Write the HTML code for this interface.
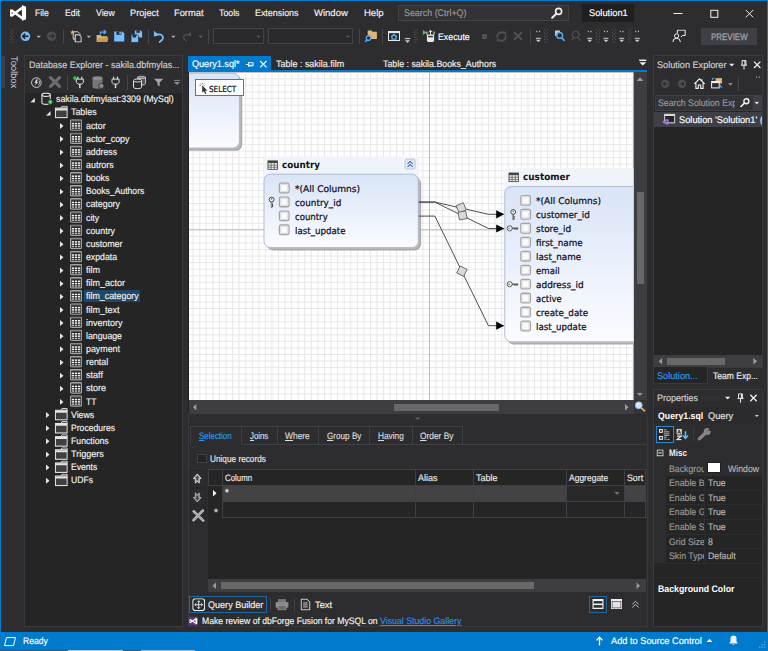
<!DOCTYPE html>
<html lang="en"><head><meta charset="utf-8"><title>Query1.sql - dbForge Fusion</title>
<style>
html,body{margin:0;padding:0;}
body{width:768px;height:651px;overflow:hidden;background:#2d2d30;position:relative;font-family:"Liberation Sans",sans-serif;}
#w{position:absolute;left:0;top:0;width:768px;height:651px;overflow:hidden;background:#2d2d30;}
#w div,#w svg{position:absolute;box-sizing:border-box;}
.t{position:absolute;white-space:nowrap;transform-origin:0 50%;display:block;}
.c{overflow:hidden;}
u{text-decoration:underline;}
</style></head><body><div id="w">
<div style="left:0.00px;top:0.00px;width:768.00px;height:1.00px;background:#007acc;"></div>
<div style="left:0.00px;top:0.00px;width:1.00px;height:651.00px;background:#007acc;"></div>
<div style="left:767.00px;top:0.00px;width:1.00px;height:651.00px;background:#007acc;"></div>
<svg style="left:9px;top:4px;transform:translate(0.60px,0.80px)" width="17" height="16.4" viewBox="0 0 17 16.4"><path d="M12.3 0.3 L16.5 2 V14.4 L12.3 16.1 Z" fill="#ffffff"/><path d="M1.6 5.3 L12.6 13.4 M1.6 11.1 L12.6 3" fill="none" stroke="#ffffff" stroke-width="2.5"/><path d="M1.3 4.6 V11.8" stroke="#ffffff" stroke-width="1.7"/></svg>
<span id="t1" class="t" style="left:35.00px;top:6.97px;height:12.35px;line-height:12.35px;font-size:9.5px;color:#f1f1f1;font-family:'Liberation Sans',sans-serif;transform:scaleX(0.8975) rotate(0.03deg);-webkit-text-stroke:0.16px #f1f1f1;">File</span>
<span id="t2" class="t" style="left:64.50px;top:6.97px;height:12.35px;line-height:12.35px;font-size:9.5px;color:#f1f1f1;font-family:'Liberation Sans',sans-serif;transform:scaleX(0.9157) rotate(0.03deg);-webkit-text-stroke:0.16px #f1f1f1;">Edit</span>
<span id="t3" class="t" style="left:95.75px;top:6.97px;height:12.35px;line-height:12.35px;font-size:9.5px;color:#f1f1f1;font-family:'Liberation Sans',sans-serif;transform:scaleX(0.9179) rotate(0.03deg);-webkit-text-stroke:0.16px #f1f1f1;">View</span>
<span id="t4" class="t" style="left:130.00px;top:6.97px;height:12.35px;line-height:12.35px;font-size:9.5px;color:#f1f1f1;font-family:'Liberation Sans',sans-serif;transform:scaleX(0.9718) rotate(0.03deg);-webkit-text-stroke:0.16px #f1f1f1;">Project</span>
<span id="t5" class="t" style="left:173.75px;top:6.97px;height:12.35px;line-height:12.35px;font-size:9.5px;color:#f1f1f1;font-family:'Liberation Sans',sans-serif;transform:scaleX(0.9800) rotate(0.03deg);-webkit-text-stroke:0.16px #f1f1f1;">Format</span>
<span id="t6" class="t" style="left:219.00px;top:6.97px;height:12.35px;line-height:12.35px;font-size:9.5px;color:#f1f1f1;font-family:'Liberation Sans',sans-serif;transform:scaleX(0.9237) rotate(0.03deg);-webkit-text-stroke:0.16px #f1f1f1;">Tools</span>
<span id="t7" class="t" style="left:255.25px;top:6.97px;height:12.35px;line-height:12.35px;font-size:9.5px;color:#f1f1f1;font-family:'Liberation Sans',sans-serif;transform:scaleX(0.9357) rotate(0.03deg);-webkit-text-stroke:0.16px #f1f1f1;">Extensions</span>
<span id="t8" class="t" style="left:314.00px;top:6.97px;height:12.35px;line-height:12.35px;font-size:9.5px;color:#f1f1f1;font-family:'Liberation Sans',sans-serif;transform:scaleX(1.0000) rotate(0.03deg);-webkit-text-stroke:0.16px #f1f1f1;">Window</span>
<span id="t9" class="t" style="left:363.75px;top:6.97px;height:12.35px;line-height:12.35px;font-size:9.5px;color:#f1f1f1;font-family:'Liberation Sans',sans-serif;transform:scaleX(1.0000) rotate(0.03deg);-webkit-text-stroke:0.16px #f1f1f1;">Help</span>
<div style="left:397.70px;top:4.50px;width:171.50px;height:16.80px;background:#333337;border:1px solid #434346;"></div>
<span id="t10" class="t" style="left:403.50px;top:7.07px;height:12.35px;line-height:12.35px;font-size:9.5px;color:#9a9a9a;font-family:'Liberation Sans',sans-serif;transform:scaleX(0.9358) rotate(0.03deg);-webkit-text-stroke:0.16px #9a9a9a;">Search (Ctrl+Q)</span>
<svg style="left:551px;top:7px" width="12" height="12" viewBox="0 0 12 12"><circle cx="7.6" cy="4.4" r="3" fill="none" stroke="#f1f1f1" stroke-width="1.6"/><path d="M5.4 6.6 L1.2 10.8" stroke="#f1f1f1" stroke-width="2" stroke-linecap="round"/></svg>
<div style="left:582.00px;top:4.00px;width:51.50px;height:18.00px;background:#1f1f20;"></div>
<span id="t11" class="t" style="left:588.50px;top:7.07px;height:12.35px;line-height:12.35px;font-size:9.5px;color:#ffffff;font-family:'Liberation Sans',sans-serif;transform:scaleX(0.9777) rotate(0.03deg);-webkit-text-stroke:0.16px #ffffff;">Solution1</span>
<svg style="left:672px;top:6px" width="90" height="16" viewBox="0 0 90 16"><path d="M1.5 7.5 H10.5" stroke="#f1f1f1" stroke-width="1"/><rect x="38.8" y="4.3" width="7" height="7" fill="none" stroke="#f1f1f1" stroke-width="1"/><path d="M73.8 4 L81.2 11.4 M81.2 4 L73.8 11.4" stroke="#f1f1f1" stroke-width="1"/></svg>
<svg style="left:9px;top:29px;transform:translate(0.50px,0.00px)" width="4.4" height="14" viewBox="0 0 4.4 14"><path d="M0.7 0.2 V14" stroke="#646468" stroke-width="1" stroke-dasharray="0.9 2.4"/><path d="M3.7 0.2 V14" stroke="#646468" stroke-width="1" stroke-dasharray="0.9 2.4"/><path d="M2.2 1.85 V14" stroke="#646468" stroke-width="1" stroke-dasharray="0.9 2.4"/></svg>
<svg style="left:19px;top:30px;transform:translate(0.90px,0.80px)" width="11" height="11" viewBox="0 0 11 11"><circle cx="5.5" cy="5.5" r="4.8" fill="#75beff"/><path d="M8.6 5.5 H3 M5.3 3 L2.8 5.5 L5.3 8" fill="none" stroke="#1e1e1e" stroke-width="1.5"/></svg>
<svg style="left:36px;top:35px;transform:translate(0.36px,0.53px)" width="4.68" height="2.65" viewBox="0 0 6 3.4"><path d="M0 0 H6 L3 3.2 Z" fill="#b4b4b4"/></svg>
<svg style="left:46px;top:31px;transform:translate(0.60px,0.20px)" width="10" height="10" viewBox="0 0 10 10"><circle cx="5" cy="5" r="4.7" fill="#4d4d51"/><path d="M2.2 5 H7.4 M5.3 2.8 L7.6 5 L5.3 7.2" fill="none" stroke="#2d2d30" stroke-width="1.3"/></svg>
<div style="left:62.80px;top:29.00px;width:1.00px;height:14.50px;background:#46464a;"></div>
<svg style="left:69px;top:29px;transform:translate(0.80px,0.60px)" width="12" height="13" viewBox="0 0 12 13"><path d="M3.4 2.2 H8.2 L10.2 4.2 V9.6 H3.4 Z" fill="#2d2d30" stroke="#d4d4d4" stroke-width="1"/><path d="M5.4 5.2 H9.4 L11.4 7.2 V12.4 H5.4 Z" fill="#2d2d30" stroke="#f1f1f1" stroke-width="1"/><path d="M2.8 0.2 L3.5 1.9 L5.3 2.1 L3.9 3.2 L4.4 4.9 L2.8 3.9 L1.2 4.9 L1.7 3.2 L0.3 2.1 L2.1 1.9 Z" fill="#e8b768"/></svg>
<svg style="left:86px;top:35px;transform:translate(0.46px,0.53px)" width="4.68" height="2.65" viewBox="0 0 6 3.4"><path d="M0 0 H6 L3 3.2 Z" fill="#b4b4b4"/></svg>
<svg style="left:96px;top:29px;transform:translate(0.00px,0.50px)" width="13" height="13" viewBox="0 0 13 13"><path d="M0.6 5.6 H4.6 L5.6 6.8 H11.4 V12.4 H0.6 Z" fill="#dcb67a"/><path d="M2.6 8.2 H12.6 L11 12.4 H0.8 Z" fill="#c99a55"/><path d="M4.5 5 V2.6 H9.2 M7.6 0.6 L9.8 2.6 L7.6 4.6" fill="none" stroke="#56a8f0" stroke-width="1.4"/></svg>
<svg style="left:113px;top:31px;transform:translate(0.80px,0.00px)" width="11" height="11" viewBox="0 0 11 11"><path d="M0.4 0.4 H8.6 L10.6 2.4 V10.6 H0.4 Z" fill="#75beff"/><rect x="2.6" y="0.4" width="5" height="3.4" fill="#2d2d30"/><rect x="5.6" y="0.9" width="1.4" height="2.3" fill="#75beff"/></svg>
<svg style="left:130px;top:30px;transform:translate(0.60px,0.00px)" width="12" height="13" viewBox="0 0 12 13"><path d="M4.2 0.4 H10 L11.6 2 V7.6 H4.2 Z" fill="#75beff"/><rect x="5.8" y="0.4" width="3.4" height="2.4" fill="#2d2d30"/><path d="M0.4 4.8 H6.6 L8 6.2 V12.6 H0.4 Z" fill="#75beff" stroke="#2d2d30" stroke-width="0.8"/><rect x="2" y="4.9" width="3.6" height="2.6" fill="#2d2d30"/></svg>
<div style="left:147.80px;top:29.00px;width:1.00px;height:14.50px;background:#46464a;"></div>
<svg style="left:153px;top:30px;transform:translate(0.50px,0.00px)" width="11" height="13" viewBox="0 0 11 13"><path d="M2.2 4.4 H6.2 a3.3 3.3 0 0 1 2.3 5.6 L5.6 12.4" fill="none" stroke="#75beff" stroke-width="1.7"/><path d="M0.4 0.8 L0.4 6.4 L5.6 5.2 Z" fill="#75beff"/></svg>
<svg style="left:170px;top:35px;transform:translate(0.96px,0.53px)" width="4.68" height="2.65" viewBox="0 0 6 3.4"><path d="M0 0 H6 L3 3.2 Z" fill="#b4b4b4"/></svg>
<svg style="left:182px;top:30px;transform:translate(0.20px,0.80px)" width="9.4" height="11" viewBox="0 0 11 13"><path d="M8.8 4.4 H4.8 a3.3 3.3 0 0 0 -2.3 5.6 L5.4 12.4" fill="none" stroke="#4e4e52" stroke-width="1.5"/><path d="M10.6 0.8 L10.6 6.4 L5.4 5.2 Z" fill="#4e4e52"/></svg>
<svg style="left:198px;top:35px;transform:translate(0.16px,0.53px)" width="4.68" height="2.65" viewBox="0 0 6 3.4"><path d="M0 0 H6 L3 3.2 Z" fill="#5e5e62"/></svg>
<div style="left:207.80px;top:29.00px;width:1.00px;height:14.50px;background:#46464a;"></div>
<div style="left:213.30px;top:28.30px;width:50.80px;height:16.00px;background:#2a2a2c;border:1px solid #434346;"></div>
<svg style="left:256px;top:35px;transform:translate(0.16px,0.53px)" width="4.68" height="2.65" viewBox="0 0 6 3.4"><path d="M0 0 H6 L3 3.2 Z" fill="#5a5a5e"/></svg>
<div style="left:268.20px;top:28.30px;width:85.00px;height:16.00px;background:#2a2a2c;border:1px solid #434346;"></div>
<svg style="left:345px;top:35px;transform:translate(0.46px,0.53px)" width="4.68" height="2.65" viewBox="0 0 6 3.4"><path d="M0 0 H6 L3 3.2 Z" fill="#5a5a5e"/></svg>
<div style="left:359.20px;top:29.00px;width:1.00px;height:14.50px;background:#46464a;"></div>
<svg style="left:364px;top:29px;transform:translate(0.50px,0.50px)" width="13" height="13" viewBox="0 0 13 13"><path d="M3.2 1 H7 L8 2.2 H12.4 V9.4 H3.2 Z" fill="#dcb67a"/><circle cx="4" cy="8.6" r="2.3" fill="#2d2d30" stroke="#56a8f0" stroke-width="1.3"/><path d="M2.4 10.4 L0.6 12.4" stroke="#56a8f0" stroke-width="1.5"/></svg>
<div style="left:381.70px;top:29.00px;width:1.00px;height:14.50px;background:#46464a;"></div>
<svg style="left:388px;top:31px" width="12" height="10" viewBox="0 0 12 10"><rect x="0.5" y="0.5" width="11" height="9" fill="#2d2d30" stroke="#e8e8e8"/><rect x="0.5" y="0.5" width="11" height="1.6" fill="#e8e8e8"/><path d="M3 6 L6 3.2 L9 6 M4 5.6 V8.2 H8 V5.6" fill="none" stroke="#56a8f0" stroke-width="1.2"/></svg>
<svg style="left:404px;top:37px;transform:translate(0.50px,0.50px)" width="6" height="6" viewBox="0 0 6 6"><rect x="0.2" y="0.4" width="5.6" height="1.2" fill="#c8c8c8"/><path d="M0.4 2.8 H5.6 L3 5.6 Z" fill="#c8c8c8"/></svg>
<svg style="left:413px;top:29px;transform:translate(0.60px,0.00px)" width="4.4" height="14" viewBox="0 0 4.4 14"><path d="M0.7 0.2 V14" stroke="#646468" stroke-width="1" stroke-dasharray="0.9 2.4"/><path d="M3.7 0.2 V14" stroke="#646468" stroke-width="1" stroke-dasharray="0.9 2.4"/><path d="M2.2 1.85 V14" stroke="#646468" stroke-width="1" stroke-dasharray="0.9 2.4"/></svg>
<svg style="left:422px;top:29px;transform:translate(0.50px,0.50px)" width="13" height="13" viewBox="0 0 13 13"><path d="M0.4 0.6 L4 3 L0.4 5.6 Z" fill="#4ec96b"/><path d="M4.4 5 H11.6 V10.8 a1.6 1.6 0 0 1 -1.6 1.6 H6 a1.6 1.6 0 0 1 -1.6 -1.6 Z" fill="#e8e8e8"/><path d="M4.4 5 V2 M11.6 5 V2 M8 5 V1 M6.2 2.6 L8 0.8 L9.8 2.6" fill="none" stroke="#e8e8e8" stroke-width="1"/><rect x="5.6" y="6.4" width="4.8" height="1.4" fill="#2d2d30"/></svg>
<span id="t12" class="t" style="left:438.00px;top:30.67px;height:12.35px;line-height:12.35px;font-size:9.5px;color:#ffffff;font-family:'Liberation Sans',sans-serif;transform:scaleX(0.9248) rotate(0.03deg);-webkit-text-stroke:0.16px #ffffff;">Execute</span>
<div style="left:482.20px;top:34.00px;width:5.00px;height:5.00px;background:#505054;"></div>
<svg style="left:496px;top:31px" width="11" height="11" viewBox="0 0 11 11"><path d="M1.4 6.4 A4 4 0 0 1 8 2.4 M9.6 4.6 A4 4 0 0 1 3 8.6" fill="none" stroke="#505054" stroke-width="1.9"/><path d="M7 0.4 L10.4 0.8 L9.6 4.4 Z M4 10.6 L0.6 10.2 L1.4 6.6 Z" fill="#505054"/></svg>
<svg style="left:513px;top:31px;transform:translate(0.00px,0.50px)" width="10" height="9" viewBox="0 0 10 9"><path d="M1 0.8 L9 8.2 M9 0.8 L1 8.2" stroke="#505054" stroke-width="2.2"/></svg>
<div style="left:530.00px;top:29.00px;width:1.00px;height:14.50px;background:#46464a;"></div>
<svg style="left:535px;top:29px;transform:translate(0.30px,0.40px)" width="6" height="14.2" viewBox="0 0 7 15"><rect x="1.2" y="0.8" width="1.2" height="1.6" fill="#c8c8c8"/><rect x="4.4" y="0.8" width="1.2" height="1.6" fill="#c8c8c8"/><rect x="0.6" y="9" width="5.8" height="1.2" fill="#c8c8c8"/><path d="M0.6 11.3 H6.4 L3.5 14.3 Z" fill="#c8c8c8"/></svg>
<svg style="left:543px;top:29px;transform:translate(0.80px,0.00px)" width="4.4" height="14" viewBox="0 0 4.4 14"><path d="M0.7 0.2 V14" stroke="#646468" stroke-width="1" stroke-dasharray="0.9 2.4"/><path d="M3.7 0.2 V14" stroke="#646468" stroke-width="1" stroke-dasharray="0.9 2.4"/><path d="M2.2 1.85 V14" stroke="#646468" stroke-width="1" stroke-dasharray="0.9 2.4"/></svg>
<svg style="left:554px;top:30px;transform:translate(0.50px,0.00px)" width="11" height="12" viewBox="0 0 11 12"><rect x="0.5" y="0.5" width="5" height="5.5" fill="#c8c8c8"/><circle cx="5.2" cy="5.4" r="2.9" fill="#2d2d30" stroke="#56a8f0" stroke-width="1.4"/><path d="M7.2 7.6 L10.2 11" stroke="#56a8f0" stroke-width="1.6"/></svg>
<svg style="left:571px;top:30px" width="11" height="12" viewBox="0 0 11 12"><circle cx="4.6" cy="4.6" r="3.4" fill="none" stroke="#4c4c50" stroke-width="1.3"/><path d="M6.8 7 L10 10.8 M3 7.6 L0.8 10.4" stroke="#4c4c50" stroke-width="1.4"/></svg>
<svg style="left:586px;top:29px;transform:translate(0.75px,0.40px)" width="6" height="14.2" viewBox="0 0 7 15"><rect x="1.2" y="0.8" width="1.2" height="1.6" fill="#c8c8c8"/><rect x="4.4" y="0.8" width="1.2" height="1.6" fill="#c8c8c8"/><rect x="0.6" y="9" width="5.8" height="1.2" fill="#c8c8c8"/><path d="M0.6 11.3 H6.4 L3.5 14.3 Z" fill="#c8c8c8"/></svg>
<svg style="left:603px;top:29px;transform:translate(0.00px,0.40px)" width="6" height="14.2" viewBox="0 0 7 15"><rect x="1.2" y="0.8" width="1.2" height="1.6" fill="#c8c8c8"/><rect x="4.4" y="0.8" width="1.2" height="1.6" fill="#c8c8c8"/><rect x="0.6" y="9" width="5.8" height="1.2" fill="#c8c8c8"/><path d="M0.6 11.3 H6.4 L3.5 14.3 Z" fill="#c8c8c8"/></svg>
<svg style="left:618px;top:29px;transform:translate(0.75px,0.40px)" width="6" height="14.2" viewBox="0 0 7 15"><rect x="1.2" y="0.8" width="1.2" height="1.6" fill="#c8c8c8"/><rect x="4.4" y="0.8" width="1.2" height="1.6" fill="#c8c8c8"/><rect x="0.6" y="9" width="5.8" height="1.2" fill="#c8c8c8"/><path d="M0.6 11.3 H6.4 L3.5 14.3 Z" fill="#c8c8c8"/></svg>
<svg style="left:634px;top:29px;transform:translate(0.25px,0.40px)" width="6" height="14.2" viewBox="0 0 7 15"><rect x="1.2" y="0.8" width="1.2" height="1.6" fill="#c8c8c8"/><rect x="4.4" y="0.8" width="1.2" height="1.6" fill="#c8c8c8"/><rect x="0.6" y="9" width="5.8" height="1.2" fill="#c8c8c8"/><path d="M0.6 11.3 H6.4 L3.5 14.3 Z" fill="#c8c8c8"/></svg>
<svg style="left:595px;top:29px;transform:translate(0.80px,0.00px)" width="4.4" height="14" viewBox="0 0 4.4 14"><path d="M0.7 0.2 V14" stroke="#646468" stroke-width="1" stroke-dasharray="0.9 2.4"/><path d="M3.7 0.2 V14" stroke="#646468" stroke-width="1" stroke-dasharray="0.9 2.4"/><path d="M2.2 1.85 V14" stroke="#646468" stroke-width="1" stroke-dasharray="0.9 2.4"/></svg>
<svg style="left:611px;top:29px;transform:translate(0.80px,0.00px)" width="4.4" height="14" viewBox="0 0 4.4 14"><path d="M0.7 0.2 V14" stroke="#646468" stroke-width="1" stroke-dasharray="0.9 2.4"/><path d="M3.7 0.2 V14" stroke="#646468" stroke-width="1" stroke-dasharray="0.9 2.4"/><path d="M2.2 1.85 V14" stroke="#646468" stroke-width="1" stroke-dasharray="0.9 2.4"/></svg>
<svg style="left:627px;top:29px;transform:translate(0.55px,0.00px)" width="4.4" height="14" viewBox="0 0 4.4 14"><path d="M0.7 0.2 V14" stroke="#646468" stroke-width="1" stroke-dasharray="0.9 2.4"/><path d="M3.7 0.2 V14" stroke="#646468" stroke-width="1" stroke-dasharray="0.9 2.4"/><path d="M2.2 1.85 V14" stroke="#646468" stroke-width="1" stroke-dasharray="0.9 2.4"/></svg>
<svg style="left:672px;top:29px;transform:translate(0.00px,0.50px)" width="14" height="13" viewBox="0 0 14 13"><path d="M5.4 3.6 V0.6 H13.2 V6 H10.4 L9 7.6" fill="none" stroke="#f1f1f1" stroke-width="1"/><circle cx="4.6" cy="6.4" r="2.1" fill="none" stroke="#f1f1f1" stroke-width="1"/><path d="M0.8 12.6 a3.8 3.8 0 0 1 7.6 0" fill="none" stroke="#f1f1f1" stroke-width="1"/></svg>
<div style="left:701.00px;top:27.50px;width:55.50px;height:17.50px;background:#3f3f46;"></div>
<span id="t13" class="t" style="left:711.00px;top:30.80px;height:12.09px;line-height:12.09px;font-size:9.3px;color:#a4a4a4;font-family:'Liberation Sans',sans-serif;transform:scaleX(0.8553) rotate(0.03deg);-webkit-text-stroke:0.25px #a4a4a4;">PREVIEW</span>
<span id="tbx" class="t" style="left:7.6px;top:55.6px;font-size:9.5px;color:#d0d0d0;writing-mode:vertical-rl;transform:rotate(0.03deg);line-height:13px;width:13px;letter-spacing:-0.1px">Toolbox</span>
<div style="left:1.00px;top:56.00px;width:4.00px;height:32.00px;background:#3f3f46;"></div>
<div style="left:0.00px;top:632.00px;width:768.00px;height:19.00px;background:#007acc;"></div>
<svg style="left:3px;top:636px;transform:translate(0.50px,0.60px)" width="13" height="10" viewBox="0 0 13 10"><path d="M3 1 H12 L10 9 H1 Z" fill="none" stroke="#ffffff" stroke-width="1"/></svg>
<span id="t14" class="t" style="left:22.70px;top:635.17px;height:12.35px;line-height:12.35px;font-size:9.5px;color:#ffffff;font-family:'Liberation Sans',sans-serif;transform:scaleX(0.9026) rotate(0.03deg);-webkit-text-stroke:0.16px #ffffff;">Ready</span>
<svg style="left:595px;top:636px;transform:translate(0.50px,0.00px)" width="8" height="10" viewBox="0 0 8 10"><path d="M4 9.6 V1.4 M1 4.4 L4 1.2 L7 4.4" fill="none" stroke="#ffffff" stroke-width="1.3"/></svg>
<span id="t15" class="t" style="left:610.60px;top:635.17px;height:12.35px;line-height:12.35px;font-size:9.5px;color:#ffffff;font-family:'Liberation Sans',sans-serif;transform:scaleX(0.9713) rotate(0.03deg);-webkit-text-stroke:0.16px #ffffff;">Add to Source Control</span>
<svg style="left:706px;top:638px;transform:translate(0.50px,0.50px)" width="6" height="4" viewBox="0 0 6 4"><path d="M0 3.6 H6 L3 0.4 Z" fill="#ffffff"/></svg>
<svg style="left:728px;top:635px;transform:translate(0.50px,0.00px)" width="10" height="11" viewBox="0 0 10 11"><path d="M5 0.6 a3 3 0 0 1 3 3 V6.4 L9.4 8.4 H0.6 L2 6.4 V3.6 a3 3 0 0 1 3 -3 Z" fill="#e6f2fa"/><path d="M3.8 9.2 a1.3 1.3 0 0 0 2.4 0 Z" fill="#e6f2fa"/></svg>
<svg style="left:758px;top:641px" width="8" height="8" viewBox="0 0 8 8"><g fill="#5aa7dc"><rect x="6" y="0.5" width="1.3" height="1.3"/><rect x="3.5" y="3" width="1.3" height="1.3"/><rect x="6" y="3" width="1.3" height="1.3"/><rect x="1" y="5.5" width="1.3" height="1.3"/><rect x="3.5" y="5.5" width="1.3" height="1.3"/><rect x="6" y="5.5" width="1.3" height="1.3"/></g></svg>
<div style="left:0.00px;top:650.00px;width:68.00px;height:1.00px;background:#2f5877;"></div>
<div style="left:68.00px;top:650.00px;width:55.00px;height:1.00px;background:#b4c8d6;"></div>
<div style="left:123.00px;top:650.00px;width:18.00px;height:1.00px;background:#2f5877;"></div>
<div style="left:141.00px;top:650.00px;width:54.00px;height:1.00px;background:#9fbad0;"></div>
<div style="left:24.00px;top:55.00px;width:159.00px;height:572.00px;background:#3a3a3e;"></div>
<div style="left:25.00px;top:56.00px;width:157.00px;height:570.00px;background:#252526;"></div>
<div style="left:25.00px;top:56.00px;width:157.00px;height:37.00px;background:#2d2d30;"></div>
<span id="t16" class="t" style="left:28.60px;top:59.28px;height:12.35px;line-height:12.35px;font-size:9.5px;color:#d0d0d0;font-family:'Liberation Sans',sans-serif;transform:scaleX(0.9413) rotate(0.03deg);-webkit-text-stroke:0.16px #d0d0d0;">Database Explorer - sakila.dbfmylas...</span>
<svg style="left:30px;top:77px;transform:translate(0.80px,0.00px)" width="11.2" height="11.2" viewBox="0 0 13 13"><circle cx="6.5" cy="6.5" r="5.6" fill="#2d2d30" stroke="#e0e0e0" stroke-width="1.1"/><path d="M6.6 2.6 L4.2 6.6 L6 6.8 L4.8 10 L8.6 5.8 L6.8 5.6 L8.4 3 Z" fill="#e0e0e0"/><path d="M9.6 4 a3.8 3.8 0 0 1 -1 5.4" fill="none" stroke="#e0e0e0" stroke-width="0.9"/></svg>
<svg style="left:48px;top:76px;transform:translate(0.50px,0.00px)" width="13" height="12" viewBox="0 0 13 12"><path d="M2 1.6 L11 10.4 M11 1.6 L2 10.4" stroke="#6c6c70" stroke-width="3.2" stroke-linecap="round"/></svg>
<div style="left:66.50px;top:75.00px;width:1.00px;height:15.00px;background:#46464a;"></div>
<svg style="left:72px;top:75px;transform:translate(0.40px,0.60px)" width="12.4" height="13.3" viewBox="0 0 14 15"><path d="M6.2 1.4 V4 M10.6 1.4 V4" stroke="#e0e0e0" stroke-width="1.4"/><path d="M4.4 4 H12.4 V7.6 L10.6 9.6 H6.2 L4.4 7.6 Z" fill="#2d2d30" stroke="#e0e0e0" stroke-width="1.1"/><path d="M8.4 9.6 V14.4" stroke="#e0e0e0" stroke-width="1.6"/><path d="M2.8 0.4 V5.2 M0.4 2.8 H5.2" stroke="#3fc55c" stroke-width="1.6"/></svg>
<svg style="left:91px;top:75px;transform:translate(0.50px,0.50px)" width="13" height="14" viewBox="0 0 13 14"><path d="M1 3 V11 a5 2.2 0 0 0 10 0 V3" fill="#77777b"/><ellipse cx="6" cy="3" rx="5" ry="2.2" fill="#8c8c90" stroke="#6a6a6e" stroke-width="0.6"/><circle cx="9.8" cy="10.4" r="2.6" fill="#8c8c90" stroke="#2d2d30" stroke-width="0.8"/></svg>
<svg style="left:110px;top:75px;transform:translate(0.40px,0.60px)" width="10.6" height="13.3" viewBox="0 0 12 15"><path d="M3.6 1.4 V4 M8 1.4 V4" stroke="#e0e0e0" stroke-width="1.4"/><path d="M1.8 4 H9.8 V7.6 L8 9.6 H3.6 L1.8 7.6 Z" fill="#2d2d30" stroke="#e0e0e0" stroke-width="1.1"/><path d="M5.8 9.6 V14.4" stroke="#e0e0e0" stroke-width="1.6"/></svg>
<div style="left:127.00px;top:75.00px;width:1.00px;height:15.00px;background:#46464a;"></div>
<svg style="left:132px;top:75px;transform:translate(0.50px,0.50px)" width="14" height="14" viewBox="0 0 14 14"><path d="M5 1.6 V8 a4 1.6 0 0 0 8 0 V1.6" fill="#55555a" stroke="#c8c8c8" stroke-width="0.9"/><ellipse cx="9" cy="1.8" rx="4" ry="1.4" fill="#8a8a8e" stroke="#c8c8c8" stroke-width="0.8"/><path d="M1 5 V11.6 a4 1.6 0 0 0 8 0 V5" fill="#2d2d30" stroke="#e0e0e0" stroke-width="1"/><ellipse cx="5" cy="5" rx="4" ry="1.5" fill="#2d2d30" stroke="#e0e0e0" stroke-width="1"/></svg>
<svg style="left:153px;top:77px;transform:translate(0.40px,0.80px)" width="10.4" height="9.4" viewBox="0 0 12 10"><path d="M0.6 0.6 H11.4 L7.2 5 V9.4 L4.8 8.2 V5 Z" fill="#a8a8ac"/></svg>
<svg style="left:173px;top:79px;transform:translate(0.50px,0.50px)" width="7" height="6" viewBox="0 0 7 6"><rect x="0.3" y="0.3" width="6.4" height="1.1" fill="#8a8a8e"/><path d="M0.4 2.6 H6.6 L3.5 5.6 Z" fill="#8a8a8e"/></svg>
<svg style="left:29px;top:97px;transform:translate(0.90px,0.60px)" width="5.4" height="5.4" viewBox="0 0 6 6"><path d="M5.6 0.2 V5.6 H0.2 Z" fill="#e8e8e8"/></svg>
<svg style="left:40px;top:92px;transform:translate(0.50px,0.20px)" width="13" height="13" viewBox="0 0 13 13"><path d="M1.4 2.6 V10.6 a4.2 1.6 0 0 0 8.4 0 V2.6" fill="#2a2a2c" stroke="#e0e0e0" stroke-width="1.1"/><ellipse cx="5.6" cy="2.6" rx="4.2" ry="1.7" fill="#2a2a2c" stroke="#e0e0e0" stroke-width="1.1"/><circle cx="9.8" cy="9.8" r="2.7" fill="#37b24d" stroke="#252526" stroke-width="0.8"/><path d="M8.6 9.2 H11 L9.8 11 Z" fill="#d8f5dd"/></svg>
<span id="t17" class="t" style="left:56.30px;top:93.28px;height:12.35px;line-height:12.35px;font-size:9.5px;color:#f1f1f1;font-family:'Liberation Sans',sans-serif;transform:scaleX(0.9288) rotate(0.03deg);-webkit-text-stroke:0.16px #f1f1f1;">sakila.dbfmylast:3309 (MySql)</span>
<svg style="left:45px;top:110px;transform:translate(0.70px,0.74px)" width="5.4" height="5.4" viewBox="0 0 6 6"><path d="M5.6 0.2 V5.6 H0.2 Z" fill="#e8e8e8"/></svg>
<svg style="left:54px;top:105px;transform:translate(0.80px,0.64px)" width="13" height="12.6" viewBox="0 0 13 12.6"><path d="M6.2 2.4 L7.2 0.6 H12.4 V2.6" fill="#3a3a3c" stroke="#dcdcdc" stroke-width="1"/><rect x="0.6" y="2.5" width="11.8" height="9.5" fill="#404042" stroke="#e4e4e4" stroke-width="1.1"/><path d="M0.6 3.9 H12.4" stroke="#e4e4e4" stroke-width="1.9"/></svg>
<span id="t18" class="t" style="left:71.20px;top:106.42px;height:12.35px;line-height:12.35px;font-size:9.5px;color:#f1f1f1;font-family:'Liberation Sans',sans-serif;transform:scaleX(0.9318) rotate(0.03deg);-webkit-text-stroke:0.16px #f1f1f1;">Tables</span>
<svg style="left:59px;top:122px;transform:translate(0.80px,0.88px)" width="3.8" height="6.2" viewBox="0 0 3.8 6.2"><path d="M0.2 0.1 L3.7 3.1 L0.2 6.1 Z" fill="#e4e4e4"/></svg>
<svg style="left:69px;top:119px;transform:translate(0.90px,0.28px)" width="12.3" height="11.6" viewBox="0 0 12.3 11.6"><rect x="0.6" y="0.6" width="11.1" height="10.4" rx="1.2" fill="#2a2a2c" stroke="#a6a6a6" stroke-width="1.2"/><path d="M1.2 1.6 H11.1" stroke="#8a8a8a" stroke-width="0.7"/><rect x="1.9" y="3.6" width="2.3" height="1.5" fill="#f4f4f4"/><rect x="5.0" y="3.6" width="2.3" height="1.5" fill="#f4f4f4"/><rect x="8.1" y="3.6" width="2.3" height="1.5" fill="#f4f4f4"/><rect x="1.9" y="5.9" width="2.3" height="1.5" fill="#f0f0f0"/><rect x="5.0" y="5.9" width="2.3" height="1.5" fill="#f0f0f0"/><rect x="8.1" y="5.9" width="2.3" height="1.5" fill="#f0f0f0"/><rect x="1.9" y="8.2" width="2.3" height="1.5" fill="#b8b8b8"/><rect x="5.0" y="8.2" width="2.3" height="1.5" fill="#b8b8b8"/><rect x="8.1" y="8.2" width="2.3" height="1.5" fill="#b8b8b8"/></svg>
<span id="t19" class="t" style="left:86.00px;top:119.56px;height:12.35px;line-height:12.35px;font-size:9.5px;color:#f1f1f1;font-family:'Liberation Sans',sans-serif;transform:scaleX(0.9276) rotate(0.03deg);-webkit-text-stroke:0.16px #f1f1f1;">actor</span>
<svg style="left:59px;top:136px;transform:translate(0.80px,0.02px)" width="3.8" height="6.2" viewBox="0 0 3.8 6.2"><path d="M0.2 0.1 L3.7 3.1 L0.2 6.1 Z" fill="#e4e4e4"/></svg>
<svg style="left:69px;top:132px;transform:translate(0.90px,0.42px)" width="12.3" height="11.6" viewBox="0 0 12.3 11.6"><rect x="0.6" y="0.6" width="11.1" height="10.4" rx="1.2" fill="#2a2a2c" stroke="#a6a6a6" stroke-width="1.2"/><path d="M1.2 1.6 H11.1" stroke="#8a8a8a" stroke-width="0.7"/><rect x="1.9" y="3.6" width="2.3" height="1.5" fill="#f4f4f4"/><rect x="5.0" y="3.6" width="2.3" height="1.5" fill="#f4f4f4"/><rect x="8.1" y="3.6" width="2.3" height="1.5" fill="#f4f4f4"/><rect x="1.9" y="5.9" width="2.3" height="1.5" fill="#f0f0f0"/><rect x="5.0" y="5.9" width="2.3" height="1.5" fill="#f0f0f0"/><rect x="8.1" y="5.9" width="2.3" height="1.5" fill="#f0f0f0"/><rect x="1.9" y="8.2" width="2.3" height="1.5" fill="#b8b8b8"/><rect x="5.0" y="8.2" width="2.3" height="1.5" fill="#b8b8b8"/><rect x="8.1" y="8.2" width="2.3" height="1.5" fill="#b8b8b8"/></svg>
<span id="t20" class="t" style="left:86.00px;top:132.69px;height:12.35px;line-height:12.35px;font-size:9.5px;color:#f1f1f1;font-family:'Liberation Sans',sans-serif;transform:scaleX(0.9356) rotate(0.03deg);-webkit-text-stroke:0.16px #f1f1f1;">actor_copy</span>
<svg style="left:59px;top:149px;transform:translate(0.80px,0.16px)" width="3.8" height="6.2" viewBox="0 0 3.8 6.2"><path d="M0.2 0.1 L3.7 3.1 L0.2 6.1 Z" fill="#e4e4e4"/></svg>
<svg style="left:69px;top:145px;transform:translate(0.90px,0.56px)" width="12.3" height="11.6" viewBox="0 0 12.3 11.6"><rect x="0.6" y="0.6" width="11.1" height="10.4" rx="1.2" fill="#2a2a2c" stroke="#a6a6a6" stroke-width="1.2"/><path d="M1.2 1.6 H11.1" stroke="#8a8a8a" stroke-width="0.7"/><rect x="1.9" y="3.6" width="2.3" height="1.5" fill="#f4f4f4"/><rect x="5.0" y="3.6" width="2.3" height="1.5" fill="#f4f4f4"/><rect x="8.1" y="3.6" width="2.3" height="1.5" fill="#f4f4f4"/><rect x="1.9" y="5.9" width="2.3" height="1.5" fill="#f0f0f0"/><rect x="5.0" y="5.9" width="2.3" height="1.5" fill="#f0f0f0"/><rect x="8.1" y="5.9" width="2.3" height="1.5" fill="#f0f0f0"/><rect x="1.9" y="8.2" width="2.3" height="1.5" fill="#b8b8b8"/><rect x="5.0" y="8.2" width="2.3" height="1.5" fill="#b8b8b8"/><rect x="8.1" y="8.2" width="2.3" height="1.5" fill="#b8b8b8"/></svg>
<span id="t21" class="t" style="left:86.00px;top:145.84px;height:12.35px;line-height:12.35px;font-size:9.5px;color:#f1f1f1;font-family:'Liberation Sans',sans-serif;transform:scaleX(0.9167) rotate(0.03deg);-webkit-text-stroke:0.16px #f1f1f1;">address</span>
<svg style="left:59px;top:162px;transform:translate(0.80px,0.30px)" width="3.8" height="6.2" viewBox="0 0 3.8 6.2"><path d="M0.2 0.1 L3.7 3.1 L0.2 6.1 Z" fill="#e4e4e4"/></svg>
<svg style="left:69px;top:158px;transform:translate(0.90px,0.70px)" width="12.3" height="11.6" viewBox="0 0 12.3 11.6"><rect x="0.6" y="0.6" width="11.1" height="10.4" rx="1.2" fill="#2a2a2c" stroke="#a6a6a6" stroke-width="1.2"/><path d="M1.2 1.6 H11.1" stroke="#8a8a8a" stroke-width="0.7"/><rect x="1.9" y="3.6" width="2.3" height="1.5" fill="#f4f4f4"/><rect x="5.0" y="3.6" width="2.3" height="1.5" fill="#f4f4f4"/><rect x="8.1" y="3.6" width="2.3" height="1.5" fill="#f4f4f4"/><rect x="1.9" y="5.9" width="2.3" height="1.5" fill="#f0f0f0"/><rect x="5.0" y="5.9" width="2.3" height="1.5" fill="#f0f0f0"/><rect x="8.1" y="5.9" width="2.3" height="1.5" fill="#f0f0f0"/><rect x="1.9" y="8.2" width="2.3" height="1.5" fill="#b8b8b8"/><rect x="5.0" y="8.2" width="2.3" height="1.5" fill="#b8b8b8"/><rect x="8.1" y="8.2" width="2.3" height="1.5" fill="#b8b8b8"/></svg>
<span id="t22" class="t" style="left:86.00px;top:158.98px;height:12.35px;line-height:12.35px;font-size:9.5px;color:#f1f1f1;font-family:'Liberation Sans',sans-serif;transform:scaleX(0.9380) rotate(0.03deg);-webkit-text-stroke:0.16px #f1f1f1;">autrors</span>
<svg style="left:59px;top:175px;transform:translate(0.80px,0.44px)" width="3.8" height="6.2" viewBox="0 0 3.8 6.2"><path d="M0.2 0.1 L3.7 3.1 L0.2 6.1 Z" fill="#e4e4e4"/></svg>
<svg style="left:69px;top:171px;transform:translate(0.90px,0.84px)" width="12.3" height="11.6" viewBox="0 0 12.3 11.6"><rect x="0.6" y="0.6" width="11.1" height="10.4" rx="1.2" fill="#2a2a2c" stroke="#a6a6a6" stroke-width="1.2"/><path d="M1.2 1.6 H11.1" stroke="#8a8a8a" stroke-width="0.7"/><rect x="1.9" y="3.6" width="2.3" height="1.5" fill="#f4f4f4"/><rect x="5.0" y="3.6" width="2.3" height="1.5" fill="#f4f4f4"/><rect x="8.1" y="3.6" width="2.3" height="1.5" fill="#f4f4f4"/><rect x="1.9" y="5.9" width="2.3" height="1.5" fill="#f0f0f0"/><rect x="5.0" y="5.9" width="2.3" height="1.5" fill="#f0f0f0"/><rect x="8.1" y="5.9" width="2.3" height="1.5" fill="#f0f0f0"/><rect x="1.9" y="8.2" width="2.3" height="1.5" fill="#b8b8b8"/><rect x="5.0" y="8.2" width="2.3" height="1.5" fill="#b8b8b8"/><rect x="8.1" y="8.2" width="2.3" height="1.5" fill="#b8b8b8"/></svg>
<span id="t23" class="t" style="left:86.00px;top:172.12px;height:12.35px;line-height:12.35px;font-size:9.5px;color:#f1f1f1;font-family:'Liberation Sans',sans-serif;transform:scaleX(0.9166) rotate(0.03deg);-webkit-text-stroke:0.16px #f1f1f1;">books</span>
<svg style="left:59px;top:188px;transform:translate(0.80px,0.58px)" width="3.8" height="6.2" viewBox="0 0 3.8 6.2"><path d="M0.2 0.1 L3.7 3.1 L0.2 6.1 Z" fill="#e4e4e4"/></svg>
<svg style="left:69px;top:184px;transform:translate(0.90px,0.98px)" width="12.3" height="11.6" viewBox="0 0 12.3 11.6"><rect x="0.6" y="0.6" width="11.1" height="10.4" rx="1.2" fill="#2a2a2c" stroke="#a6a6a6" stroke-width="1.2"/><path d="M1.2 1.6 H11.1" stroke="#8a8a8a" stroke-width="0.7"/><rect x="1.9" y="3.6" width="2.3" height="1.5" fill="#f4f4f4"/><rect x="5.0" y="3.6" width="2.3" height="1.5" fill="#f4f4f4"/><rect x="8.1" y="3.6" width="2.3" height="1.5" fill="#f4f4f4"/><rect x="1.9" y="5.9" width="2.3" height="1.5" fill="#f0f0f0"/><rect x="5.0" y="5.9" width="2.3" height="1.5" fill="#f0f0f0"/><rect x="8.1" y="5.9" width="2.3" height="1.5" fill="#f0f0f0"/><rect x="1.9" y="8.2" width="2.3" height="1.5" fill="#b8b8b8"/><rect x="5.0" y="8.2" width="2.3" height="1.5" fill="#b8b8b8"/><rect x="8.1" y="8.2" width="2.3" height="1.5" fill="#b8b8b8"/></svg>
<span id="t24" class="t" style="left:86.00px;top:185.25px;height:12.35px;line-height:12.35px;font-size:9.5px;color:#f1f1f1;font-family:'Liberation Sans',sans-serif;transform:scaleX(0.9050) rotate(0.03deg);-webkit-text-stroke:0.16px #f1f1f1;">Books_Authors</span>
<svg style="left:59px;top:201px;transform:translate(0.80px,0.72px)" width="3.8" height="6.2" viewBox="0 0 3.8 6.2"><path d="M0.2 0.1 L3.7 3.1 L0.2 6.1 Z" fill="#e4e4e4"/></svg>
<svg style="left:69px;top:198px;transform:translate(0.90px,0.12px)" width="12.3" height="11.6" viewBox="0 0 12.3 11.6"><rect x="0.6" y="0.6" width="11.1" height="10.4" rx="1.2" fill="#2a2a2c" stroke="#a6a6a6" stroke-width="1.2"/><path d="M1.2 1.6 H11.1" stroke="#8a8a8a" stroke-width="0.7"/><rect x="1.9" y="3.6" width="2.3" height="1.5" fill="#f4f4f4"/><rect x="5.0" y="3.6" width="2.3" height="1.5" fill="#f4f4f4"/><rect x="8.1" y="3.6" width="2.3" height="1.5" fill="#f4f4f4"/><rect x="1.9" y="5.9" width="2.3" height="1.5" fill="#f0f0f0"/><rect x="5.0" y="5.9" width="2.3" height="1.5" fill="#f0f0f0"/><rect x="8.1" y="5.9" width="2.3" height="1.5" fill="#f0f0f0"/><rect x="1.9" y="8.2" width="2.3" height="1.5" fill="#b8b8b8"/><rect x="5.0" y="8.2" width="2.3" height="1.5" fill="#b8b8b8"/><rect x="8.1" y="8.2" width="2.3" height="1.5" fill="#b8b8b8"/></svg>
<span id="t25" class="t" style="left:86.00px;top:198.40px;height:12.35px;line-height:12.35px;font-size:9.5px;color:#f1f1f1;font-family:'Liberation Sans',sans-serif;transform:scaleX(0.9330) rotate(0.03deg);-webkit-text-stroke:0.16px #f1f1f1;">category</span>
<svg style="left:59px;top:214px;transform:translate(0.80px,0.86px)" width="3.8" height="6.2" viewBox="0 0 3.8 6.2"><path d="M0.2 0.1 L3.7 3.1 L0.2 6.1 Z" fill="#e4e4e4"/></svg>
<svg style="left:69px;top:211px;transform:translate(0.90px,0.26px)" width="12.3" height="11.6" viewBox="0 0 12.3 11.6"><rect x="0.6" y="0.6" width="11.1" height="10.4" rx="1.2" fill="#2a2a2c" stroke="#a6a6a6" stroke-width="1.2"/><path d="M1.2 1.6 H11.1" stroke="#8a8a8a" stroke-width="0.7"/><rect x="1.9" y="3.6" width="2.3" height="1.5" fill="#f4f4f4"/><rect x="5.0" y="3.6" width="2.3" height="1.5" fill="#f4f4f4"/><rect x="8.1" y="3.6" width="2.3" height="1.5" fill="#f4f4f4"/><rect x="1.9" y="5.9" width="2.3" height="1.5" fill="#f0f0f0"/><rect x="5.0" y="5.9" width="2.3" height="1.5" fill="#f0f0f0"/><rect x="8.1" y="5.9" width="2.3" height="1.5" fill="#f0f0f0"/><rect x="1.9" y="8.2" width="2.3" height="1.5" fill="#b8b8b8"/><rect x="5.0" y="8.2" width="2.3" height="1.5" fill="#b8b8b8"/><rect x="8.1" y="8.2" width="2.3" height="1.5" fill="#b8b8b8"/></svg>
<span id="t26" class="t" style="left:86.00px;top:211.54px;height:12.35px;line-height:12.35px;font-size:9.5px;color:#f1f1f1;font-family:'Liberation Sans',sans-serif;transform:scaleX(0.9294) rotate(0.03deg);-webkit-text-stroke:0.16px #f1f1f1;">city</span>
<svg style="left:59px;top:228px;transform:translate(0.80px,0.00px)" width="3.8" height="6.2" viewBox="0 0 3.8 6.2"><path d="M0.2 0.1 L3.7 3.1 L0.2 6.1 Z" fill="#e4e4e4"/></svg>
<svg style="left:69px;top:224px;transform:translate(0.90px,0.40px)" width="12.3" height="11.6" viewBox="0 0 12.3 11.6"><rect x="0.6" y="0.6" width="11.1" height="10.4" rx="1.2" fill="#2a2a2c" stroke="#a6a6a6" stroke-width="1.2"/><path d="M1.2 1.6 H11.1" stroke="#8a8a8a" stroke-width="0.7"/><rect x="1.9" y="3.6" width="2.3" height="1.5" fill="#f4f4f4"/><rect x="5.0" y="3.6" width="2.3" height="1.5" fill="#f4f4f4"/><rect x="8.1" y="3.6" width="2.3" height="1.5" fill="#f4f4f4"/><rect x="1.9" y="5.9" width="2.3" height="1.5" fill="#f0f0f0"/><rect x="5.0" y="5.9" width="2.3" height="1.5" fill="#f0f0f0"/><rect x="8.1" y="5.9" width="2.3" height="1.5" fill="#f0f0f0"/><rect x="1.9" y="8.2" width="2.3" height="1.5" fill="#b8b8b8"/><rect x="5.0" y="8.2" width="2.3" height="1.5" fill="#b8b8b8"/><rect x="8.1" y="8.2" width="2.3" height="1.5" fill="#b8b8b8"/></svg>
<span id="t27" class="t" style="left:86.00px;top:224.68px;height:12.35px;line-height:12.35px;font-size:9.5px;color:#f1f1f1;font-family:'Liberation Sans',sans-serif;transform:scaleX(0.9306) rotate(0.03deg);-webkit-text-stroke:0.16px #f1f1f1;">country</span>
<svg style="left:59px;top:241px;transform:translate(0.80px,0.14px)" width="3.8" height="6.2" viewBox="0 0 3.8 6.2"><path d="M0.2 0.1 L3.7 3.1 L0.2 6.1 Z" fill="#e4e4e4"/></svg>
<svg style="left:69px;top:237px;transform:translate(0.90px,0.54px)" width="12.3" height="11.6" viewBox="0 0 12.3 11.6"><rect x="0.6" y="0.6" width="11.1" height="10.4" rx="1.2" fill="#2a2a2c" stroke="#a6a6a6" stroke-width="1.2"/><path d="M1.2 1.6 H11.1" stroke="#8a8a8a" stroke-width="0.7"/><rect x="1.9" y="3.6" width="2.3" height="1.5" fill="#f4f4f4"/><rect x="5.0" y="3.6" width="2.3" height="1.5" fill="#f4f4f4"/><rect x="8.1" y="3.6" width="2.3" height="1.5" fill="#f4f4f4"/><rect x="1.9" y="5.9" width="2.3" height="1.5" fill="#f0f0f0"/><rect x="5.0" y="5.9" width="2.3" height="1.5" fill="#f0f0f0"/><rect x="8.1" y="5.9" width="2.3" height="1.5" fill="#f0f0f0"/><rect x="1.9" y="8.2" width="2.3" height="1.5" fill="#b8b8b8"/><rect x="5.0" y="8.2" width="2.3" height="1.5" fill="#b8b8b8"/><rect x="8.1" y="8.2" width="2.3" height="1.5" fill="#b8b8b8"/></svg>
<span id="t28" class="t" style="left:86.00px;top:237.82px;height:12.35px;line-height:12.35px;font-size:9.5px;color:#f1f1f1;font-family:'Liberation Sans',sans-serif;transform:scaleX(0.9338) rotate(0.03deg);-webkit-text-stroke:0.16px #f1f1f1;">customer</span>
<svg style="left:59px;top:254px;transform:translate(0.80px,0.28px)" width="3.8" height="6.2" viewBox="0 0 3.8 6.2"><path d="M0.2 0.1 L3.7 3.1 L0.2 6.1 Z" fill="#e4e4e4"/></svg>
<svg style="left:69px;top:250px;transform:translate(0.90px,0.68px)" width="12.3" height="11.6" viewBox="0 0 12.3 11.6"><rect x="0.6" y="0.6" width="11.1" height="10.4" rx="1.2" fill="#2a2a2c" stroke="#a6a6a6" stroke-width="1.2"/><path d="M1.2 1.6 H11.1" stroke="#8a8a8a" stroke-width="0.7"/><rect x="1.9" y="3.6" width="2.3" height="1.5" fill="#f4f4f4"/><rect x="5.0" y="3.6" width="2.3" height="1.5" fill="#f4f4f4"/><rect x="8.1" y="3.6" width="2.3" height="1.5" fill="#f4f4f4"/><rect x="1.9" y="5.9" width="2.3" height="1.5" fill="#f0f0f0"/><rect x="5.0" y="5.9" width="2.3" height="1.5" fill="#f0f0f0"/><rect x="8.1" y="5.9" width="2.3" height="1.5" fill="#f0f0f0"/><rect x="1.9" y="8.2" width="2.3" height="1.5" fill="#b8b8b8"/><rect x="5.0" y="8.2" width="2.3" height="1.5" fill="#b8b8b8"/><rect x="8.1" y="8.2" width="2.3" height="1.5" fill="#b8b8b8"/></svg>
<span id="t29" class="t" style="left:86.00px;top:250.96px;height:12.35px;line-height:12.35px;font-size:9.5px;color:#f1f1f1;font-family:'Liberation Sans',sans-serif;transform:scaleX(0.9167) rotate(0.03deg);-webkit-text-stroke:0.16px #f1f1f1;">expdata</span>
<svg style="left:59px;top:267px;transform:translate(0.80px,0.42px)" width="3.8" height="6.2" viewBox="0 0 3.8 6.2"><path d="M0.2 0.1 L3.7 3.1 L0.2 6.1 Z" fill="#e4e4e4"/></svg>
<svg style="left:69px;top:263px;transform:translate(0.90px,0.82px)" width="12.3" height="11.6" viewBox="0 0 12.3 11.6"><rect x="0.6" y="0.6" width="11.1" height="10.4" rx="1.2" fill="#2a2a2c" stroke="#a6a6a6" stroke-width="1.2"/><path d="M1.2 1.6 H11.1" stroke="#8a8a8a" stroke-width="0.7"/><rect x="1.9" y="3.6" width="2.3" height="1.5" fill="#f4f4f4"/><rect x="5.0" y="3.6" width="2.3" height="1.5" fill="#f4f4f4"/><rect x="8.1" y="3.6" width="2.3" height="1.5" fill="#f4f4f4"/><rect x="1.9" y="5.9" width="2.3" height="1.5" fill="#f0f0f0"/><rect x="5.0" y="5.9" width="2.3" height="1.5" fill="#f0f0f0"/><rect x="8.1" y="5.9" width="2.3" height="1.5" fill="#f0f0f0"/><rect x="1.9" y="8.2" width="2.3" height="1.5" fill="#b8b8b8"/><rect x="5.0" y="8.2" width="2.3" height="1.5" fill="#b8b8b8"/><rect x="8.1" y="8.2" width="2.3" height="1.5" fill="#b8b8b8"/></svg>
<span id="t30" class="t" style="left:86.00px;top:264.10px;height:12.35px;line-height:12.35px;font-size:9.5px;color:#f1f1f1;font-family:'Liberation Sans',sans-serif;transform:scaleX(0.9468) rotate(0.03deg);-webkit-text-stroke:0.16px #f1f1f1;">film</span>
<svg style="left:59px;top:280px;transform:translate(0.80px,0.56px)" width="3.8" height="6.2" viewBox="0 0 3.8 6.2"><path d="M0.2 0.1 L3.7 3.1 L0.2 6.1 Z" fill="#e4e4e4"/></svg>
<svg style="left:69px;top:276px;transform:translate(0.90px,0.96px)" width="12.3" height="11.6" viewBox="0 0 12.3 11.6"><rect x="0.6" y="0.6" width="11.1" height="10.4" rx="1.2" fill="#2a2a2c" stroke="#a6a6a6" stroke-width="1.2"/><path d="M1.2 1.6 H11.1" stroke="#8a8a8a" stroke-width="0.7"/><rect x="1.9" y="3.6" width="2.3" height="1.5" fill="#f4f4f4"/><rect x="5.0" y="3.6" width="2.3" height="1.5" fill="#f4f4f4"/><rect x="8.1" y="3.6" width="2.3" height="1.5" fill="#f4f4f4"/><rect x="1.9" y="5.9" width="2.3" height="1.5" fill="#f0f0f0"/><rect x="5.0" y="5.9" width="2.3" height="1.5" fill="#f0f0f0"/><rect x="8.1" y="5.9" width="2.3" height="1.5" fill="#f0f0f0"/><rect x="1.9" y="8.2" width="2.3" height="1.5" fill="#b8b8b8"/><rect x="5.0" y="8.2" width="2.3" height="1.5" fill="#b8b8b8"/><rect x="8.1" y="8.2" width="2.3" height="1.5" fill="#b8b8b8"/></svg>
<span id="t31" class="t" style="left:86.00px;top:277.24px;height:12.35px;line-height:12.35px;font-size:9.5px;color:#f1f1f1;font-family:'Liberation Sans',sans-serif;transform:scaleX(0.9468) rotate(0.03deg);-webkit-text-stroke:0.16px #f1f1f1;">film_actor</span>
<div style="left:84.30px;top:289.70px;width:55.80px;height:12.40px;background:#1d4868;"></div>
<svg style="left:59px;top:293px;transform:translate(0.80px,0.70px)" width="3.8" height="6.2" viewBox="0 0 3.8 6.2"><path d="M0.2 0.1 L3.7 3.1 L0.2 6.1 Z" fill="#e4e4e4"/></svg>
<svg style="left:69px;top:290px;transform:translate(0.90px,0.10px)" width="12.3" height="11.6" viewBox="0 0 12.3 11.6"><rect x="0.6" y="0.6" width="11.1" height="10.4" rx="1.2" fill="#2a2a2c" stroke="#a6a6a6" stroke-width="1.2"/><path d="M1.2 1.6 H11.1" stroke="#8a8a8a" stroke-width="0.7"/><rect x="1.9" y="3.6" width="2.3" height="1.5" fill="#f4f4f4"/><rect x="5.0" y="3.6" width="2.3" height="1.5" fill="#f4f4f4"/><rect x="8.1" y="3.6" width="2.3" height="1.5" fill="#f4f4f4"/><rect x="1.9" y="5.9" width="2.3" height="1.5" fill="#f0f0f0"/><rect x="5.0" y="5.9" width="2.3" height="1.5" fill="#f0f0f0"/><rect x="8.1" y="5.9" width="2.3" height="1.5" fill="#f0f0f0"/><rect x="1.9" y="8.2" width="2.3" height="1.5" fill="#b8b8b8"/><rect x="5.0" y="8.2" width="2.3" height="1.5" fill="#b8b8b8"/><rect x="8.1" y="8.2" width="2.3" height="1.5" fill="#b8b8b8"/></svg>
<span id="t32" class="t" style="left:86.00px;top:290.38px;height:12.35px;line-height:12.35px;font-size:9.5px;color:#f1f1f1;font-family:'Liberation Sans',sans-serif;transform:scaleX(0.9335) rotate(0.03deg);-webkit-text-stroke:0.16px #f1f1f1;">film_category</span>
<svg style="left:59px;top:306px;transform:translate(0.80px,0.84px)" width="3.8" height="6.2" viewBox="0 0 3.8 6.2"><path d="M0.2 0.1 L3.7 3.1 L0.2 6.1 Z" fill="#e4e4e4"/></svg>
<svg style="left:69px;top:303px;transform:translate(0.90px,0.24px)" width="12.3" height="11.6" viewBox="0 0 12.3 11.6"><rect x="0.6" y="0.6" width="11.1" height="10.4" rx="1.2" fill="#2a2a2c" stroke="#a6a6a6" stroke-width="1.2"/><path d="M1.2 1.6 H11.1" stroke="#8a8a8a" stroke-width="0.7"/><rect x="1.9" y="3.6" width="2.3" height="1.5" fill="#f4f4f4"/><rect x="5.0" y="3.6" width="2.3" height="1.5" fill="#f4f4f4"/><rect x="8.1" y="3.6" width="2.3" height="1.5" fill="#f4f4f4"/><rect x="1.9" y="5.9" width="2.3" height="1.5" fill="#f0f0f0"/><rect x="5.0" y="5.9" width="2.3" height="1.5" fill="#f0f0f0"/><rect x="8.1" y="5.9" width="2.3" height="1.5" fill="#f0f0f0"/><rect x="1.9" y="8.2" width="2.3" height="1.5" fill="#b8b8b8"/><rect x="5.0" y="8.2" width="2.3" height="1.5" fill="#b8b8b8"/><rect x="8.1" y="8.2" width="2.3" height="1.5" fill="#b8b8b8"/></svg>
<span id="t33" class="t" style="left:86.00px;top:303.51px;height:12.35px;line-height:12.35px;font-size:9.5px;color:#f1f1f1;font-family:'Liberation Sans',sans-serif;transform:scaleX(0.9468) rotate(0.03deg);-webkit-text-stroke:0.16px #f1f1f1;">film_text</span>
<svg style="left:59px;top:319px;transform:translate(0.80px,0.98px)" width="3.8" height="6.2" viewBox="0 0 3.8 6.2"><path d="M0.2 0.1 L3.7 3.1 L0.2 6.1 Z" fill="#e4e4e4"/></svg>
<svg style="left:69px;top:316px;transform:translate(0.90px,0.38px)" width="12.3" height="11.6" viewBox="0 0 12.3 11.6"><rect x="0.6" y="0.6" width="11.1" height="10.4" rx="1.2" fill="#2a2a2c" stroke="#a6a6a6" stroke-width="1.2"/><path d="M1.2 1.6 H11.1" stroke="#8a8a8a" stroke-width="0.7"/><rect x="1.9" y="3.6" width="2.3" height="1.5" fill="#f4f4f4"/><rect x="5.0" y="3.6" width="2.3" height="1.5" fill="#f4f4f4"/><rect x="8.1" y="3.6" width="2.3" height="1.5" fill="#f4f4f4"/><rect x="1.9" y="5.9" width="2.3" height="1.5" fill="#f0f0f0"/><rect x="5.0" y="5.9" width="2.3" height="1.5" fill="#f0f0f0"/><rect x="8.1" y="5.9" width="2.3" height="1.5" fill="#f0f0f0"/><rect x="1.9" y="8.2" width="2.3" height="1.5" fill="#b8b8b8"/><rect x="5.0" y="8.2" width="2.3" height="1.5" fill="#b8b8b8"/><rect x="8.1" y="8.2" width="2.3" height="1.5" fill="#b8b8b8"/></svg>
<span id="t34" class="t" style="left:86.00px;top:316.65px;height:12.35px;line-height:12.35px;font-size:9.5px;color:#f1f1f1;font-family:'Liberation Sans',sans-serif;transform:scaleX(0.9463) rotate(0.03deg);-webkit-text-stroke:0.16px #f1f1f1;">inventory</span>
<svg style="left:59px;top:333px;transform:translate(0.80px,0.12px)" width="3.8" height="6.2" viewBox="0 0 3.8 6.2"><path d="M0.2 0.1 L3.7 3.1 L0.2 6.1 Z" fill="#e4e4e4"/></svg>
<svg style="left:69px;top:329px;transform:translate(0.90px,0.52px)" width="12.3" height="11.6" viewBox="0 0 12.3 11.6"><rect x="0.6" y="0.6" width="11.1" height="10.4" rx="1.2" fill="#2a2a2c" stroke="#a6a6a6" stroke-width="1.2"/><path d="M1.2 1.6 H11.1" stroke="#8a8a8a" stroke-width="0.7"/><rect x="1.9" y="3.6" width="2.3" height="1.5" fill="#f4f4f4"/><rect x="5.0" y="3.6" width="2.3" height="1.5" fill="#f4f4f4"/><rect x="8.1" y="3.6" width="2.3" height="1.5" fill="#f4f4f4"/><rect x="1.9" y="5.9" width="2.3" height="1.5" fill="#f0f0f0"/><rect x="5.0" y="5.9" width="2.3" height="1.5" fill="#f0f0f0"/><rect x="8.1" y="5.9" width="2.3" height="1.5" fill="#f0f0f0"/><rect x="1.9" y="8.2" width="2.3" height="1.5" fill="#b8b8b8"/><rect x="5.0" y="8.2" width="2.3" height="1.5" fill="#b8b8b8"/><rect x="8.1" y="8.2" width="2.3" height="1.5" fill="#b8b8b8"/></svg>
<span id="t35" class="t" style="left:86.00px;top:329.80px;height:12.35px;line-height:12.35px;font-size:9.5px;color:#f1f1f1;font-family:'Liberation Sans',sans-serif;transform:scaleX(0.9204) rotate(0.03deg);-webkit-text-stroke:0.16px #f1f1f1;">language</span>
<svg style="left:59px;top:346px;transform:translate(0.80px,0.26px)" width="3.8" height="6.2" viewBox="0 0 3.8 6.2"><path d="M0.2 0.1 L3.7 3.1 L0.2 6.1 Z" fill="#e4e4e4"/></svg>
<svg style="left:69px;top:342px;transform:translate(0.90px,0.66px)" width="12.3" height="11.6" viewBox="0 0 12.3 11.6"><rect x="0.6" y="0.6" width="11.1" height="10.4" rx="1.2" fill="#2a2a2c" stroke="#a6a6a6" stroke-width="1.2"/><path d="M1.2 1.6 H11.1" stroke="#8a8a8a" stroke-width="0.7"/><rect x="1.9" y="3.6" width="2.3" height="1.5" fill="#f4f4f4"/><rect x="5.0" y="3.6" width="2.3" height="1.5" fill="#f4f4f4"/><rect x="8.1" y="3.6" width="2.3" height="1.5" fill="#f4f4f4"/><rect x="1.9" y="5.9" width="2.3" height="1.5" fill="#f0f0f0"/><rect x="5.0" y="5.9" width="2.3" height="1.5" fill="#f0f0f0"/><rect x="8.1" y="5.9" width="2.3" height="1.5" fill="#f0f0f0"/><rect x="1.9" y="8.2" width="2.3" height="1.5" fill="#b8b8b8"/><rect x="5.0" y="8.2" width="2.3" height="1.5" fill="#b8b8b8"/><rect x="8.1" y="8.2" width="2.3" height="1.5" fill="#b8b8b8"/></svg>
<span id="t36" class="t" style="left:86.00px;top:342.94px;height:12.35px;line-height:12.35px;font-size:9.5px;color:#f1f1f1;font-family:'Liberation Sans',sans-serif;transform:scaleX(0.9330) rotate(0.03deg);-webkit-text-stroke:0.16px #f1f1f1;">payment</span>
<svg style="left:59px;top:359px;transform:translate(0.80px,0.40px)" width="3.8" height="6.2" viewBox="0 0 3.8 6.2"><path d="M0.2 0.1 L3.7 3.1 L0.2 6.1 Z" fill="#e4e4e4"/></svg>
<svg style="left:69px;top:355px;transform:translate(0.90px,0.80px)" width="12.3" height="11.6" viewBox="0 0 12.3 11.6"><rect x="0.6" y="0.6" width="11.1" height="10.4" rx="1.2" fill="#2a2a2c" stroke="#a6a6a6" stroke-width="1.2"/><path d="M1.2 1.6 H11.1" stroke="#8a8a8a" stroke-width="0.7"/><rect x="1.9" y="3.6" width="2.3" height="1.5" fill="#f4f4f4"/><rect x="5.0" y="3.6" width="2.3" height="1.5" fill="#f4f4f4"/><rect x="8.1" y="3.6" width="2.3" height="1.5" fill="#f4f4f4"/><rect x="1.9" y="5.9" width="2.3" height="1.5" fill="#f0f0f0"/><rect x="5.0" y="5.9" width="2.3" height="1.5" fill="#f0f0f0"/><rect x="8.1" y="5.9" width="2.3" height="1.5" fill="#f0f0f0"/><rect x="1.9" y="8.2" width="2.3" height="1.5" fill="#b8b8b8"/><rect x="5.0" y="8.2" width="2.3" height="1.5" fill="#b8b8b8"/><rect x="8.1" y="8.2" width="2.3" height="1.5" fill="#b8b8b8"/></svg>
<span id="t37" class="t" style="left:86.00px;top:356.08px;height:12.35px;line-height:12.35px;font-size:9.5px;color:#f1f1f1;font-family:'Liberation Sans',sans-serif;transform:scaleX(0.9359) rotate(0.03deg);-webkit-text-stroke:0.16px #f1f1f1;">rental</span>
<svg style="left:59px;top:372px;transform:translate(0.80px,0.54px)" width="3.8" height="6.2" viewBox="0 0 3.8 6.2"><path d="M0.2 0.1 L3.7 3.1 L0.2 6.1 Z" fill="#e4e4e4"/></svg>
<svg style="left:69px;top:368px;transform:translate(0.90px,0.94px)" width="12.3" height="11.6" viewBox="0 0 12.3 11.6"><rect x="0.6" y="0.6" width="11.1" height="10.4" rx="1.2" fill="#2a2a2c" stroke="#a6a6a6" stroke-width="1.2"/><path d="M1.2 1.6 H11.1" stroke="#8a8a8a" stroke-width="0.7"/><rect x="1.9" y="3.6" width="2.3" height="1.5" fill="#f4f4f4"/><rect x="5.0" y="3.6" width="2.3" height="1.5" fill="#f4f4f4"/><rect x="8.1" y="3.6" width="2.3" height="1.5" fill="#f4f4f4"/><rect x="1.9" y="5.9" width="2.3" height="1.5" fill="#f0f0f0"/><rect x="5.0" y="5.9" width="2.3" height="1.5" fill="#f0f0f0"/><rect x="8.1" y="5.9" width="2.3" height="1.5" fill="#f0f0f0"/><rect x="1.9" y="8.2" width="2.3" height="1.5" fill="#b8b8b8"/><rect x="5.0" y="8.2" width="2.3" height="1.5" fill="#b8b8b8"/><rect x="8.1" y="8.2" width="2.3" height="1.5" fill="#b8b8b8"/></svg>
<span id="t38" class="t" style="left:86.00px;top:369.22px;height:12.35px;line-height:12.35px;font-size:9.5px;color:#f1f1f1;font-family:'Liberation Sans',sans-serif;transform:scaleX(0.9500) rotate(0.03deg);-webkit-text-stroke:0.16px #f1f1f1;">staff</span>
<svg style="left:59px;top:385px;transform:translate(0.80px,0.68px)" width="3.8" height="6.2" viewBox="0 0 3.8 6.2"><path d="M0.2 0.1 L3.7 3.1 L0.2 6.1 Z" fill="#e4e4e4"/></svg>
<svg style="left:69px;top:382px;transform:translate(0.90px,0.08px)" width="12.3" height="11.6" viewBox="0 0 12.3 11.6"><rect x="0.6" y="0.6" width="11.1" height="10.4" rx="1.2" fill="#2a2a2c" stroke="#a6a6a6" stroke-width="1.2"/><path d="M1.2 1.6 H11.1" stroke="#8a8a8a" stroke-width="0.7"/><rect x="1.9" y="3.6" width="2.3" height="1.5" fill="#f4f4f4"/><rect x="5.0" y="3.6" width="2.3" height="1.5" fill="#f4f4f4"/><rect x="8.1" y="3.6" width="2.3" height="1.5" fill="#f4f4f4"/><rect x="1.9" y="5.9" width="2.3" height="1.5" fill="#f0f0f0"/><rect x="5.0" y="5.9" width="2.3" height="1.5" fill="#f0f0f0"/><rect x="8.1" y="5.9" width="2.3" height="1.5" fill="#f0f0f0"/><rect x="1.9" y="8.2" width="2.3" height="1.5" fill="#b8b8b8"/><rect x="5.0" y="8.2" width="2.3" height="1.5" fill="#b8b8b8"/><rect x="8.1" y="8.2" width="2.3" height="1.5" fill="#b8b8b8"/></svg>
<span id="t39" class="t" style="left:86.00px;top:382.36px;height:12.35px;line-height:12.35px;font-size:9.5px;color:#f1f1f1;font-family:'Liberation Sans',sans-serif;transform:scaleX(0.9500) rotate(0.03deg);-webkit-text-stroke:0.16px #f1f1f1;">store</span>
<svg style="left:59px;top:398px;transform:translate(0.80px,0.82px)" width="3.8" height="6.2" viewBox="0 0 3.8 6.2"><path d="M0.2 0.1 L3.7 3.1 L0.2 6.1 Z" fill="#e4e4e4"/></svg>
<svg style="left:69px;top:395px;transform:translate(0.90px,0.22px)" width="12.3" height="11.6" viewBox="0 0 12.3 11.6"><rect x="0.6" y="0.6" width="11.1" height="10.4" rx="1.2" fill="#2a2a2c" stroke="#a6a6a6" stroke-width="1.2"/><path d="M1.2 1.6 H11.1" stroke="#8a8a8a" stroke-width="0.7"/><rect x="1.9" y="3.6" width="2.3" height="1.5" fill="#f4f4f4"/><rect x="5.0" y="3.6" width="2.3" height="1.5" fill="#f4f4f4"/><rect x="8.1" y="3.6" width="2.3" height="1.5" fill="#f4f4f4"/><rect x="1.9" y="5.9" width="2.3" height="1.5" fill="#f0f0f0"/><rect x="5.0" y="5.9" width="2.3" height="1.5" fill="#f0f0f0"/><rect x="8.1" y="5.9" width="2.3" height="1.5" fill="#f0f0f0"/><rect x="1.9" y="8.2" width="2.3" height="1.5" fill="#b8b8b8"/><rect x="5.0" y="8.2" width="2.3" height="1.5" fill="#b8b8b8"/><rect x="8.1" y="8.2" width="2.3" height="1.5" fill="#b8b8b8"/></svg>
<span id="t40" class="t" style="left:86.00px;top:395.50px;height:12.35px;line-height:12.35px;font-size:9.5px;color:#f1f1f1;font-family:'Liberation Sans',sans-serif;transform:scaleX(0.9050) rotate(0.03deg);-webkit-text-stroke:0.16px #f1f1f1;">TT</span>
<svg style="left:45px;top:411px;transform:translate(0.80px,0.96px)" width="3.8" height="6.2" viewBox="0 0 3.8 6.2"><path d="M0.2 0.1 L3.7 3.1 L0.2 6.1 Z" fill="#e4e4e4"/></svg>
<svg style="left:54px;top:407px;transform:translate(0.80px,0.86px)" width="13" height="12.6" viewBox="0 0 13 12.6"><path d="M6.2 2.4 L7.2 0.6 H12.4 V2.6" fill="#3a3a3c" stroke="#dcdcdc" stroke-width="1"/><rect x="0.6" y="2.5" width="11.8" height="9.5" fill="#404042" stroke="#e4e4e4" stroke-width="1.1"/><path d="M0.6 3.9 H12.4" stroke="#e4e4e4" stroke-width="1.9"/></svg>
<span id="t41" class="t" style="left:70.90px;top:408.63px;height:12.35px;line-height:12.35px;font-size:9.5px;color:#f1f1f1;font-family:'Liberation Sans',sans-serif;transform:scaleX(0.9174) rotate(0.03deg);-webkit-text-stroke:0.16px #f1f1f1;">Views</span>
<svg style="left:45px;top:425px;transform:translate(0.80px,0.10px)" width="3.8" height="6.2" viewBox="0 0 3.8 6.2"><path d="M0.2 0.1 L3.7 3.1 L0.2 6.1 Z" fill="#e4e4e4"/></svg>
<svg style="left:54px;top:421px;transform:translate(0.80px,0.00px)" width="13" height="12.6" viewBox="0 0 13 12.6"><path d="M6.2 2.4 L7.2 0.6 H12.4 V2.6" fill="#3a3a3c" stroke="#dcdcdc" stroke-width="1"/><rect x="0.6" y="2.5" width="11.8" height="9.5" fill="#404042" stroke="#e4e4e4" stroke-width="1.1"/><path d="M0.6 3.9 H12.4" stroke="#e4e4e4" stroke-width="1.9"/></svg>
<span id="t42" class="t" style="left:70.90px;top:421.77px;height:12.35px;line-height:12.35px;font-size:9.5px;color:#f1f1f1;font-family:'Liberation Sans',sans-serif;transform:scaleX(0.9050) rotate(0.03deg);-webkit-text-stroke:0.16px #f1f1f1;">Procedures</span>
<svg style="left:45px;top:438px;transform:translate(0.80px,0.24px)" width="3.8" height="6.2" viewBox="0 0 3.8 6.2"><path d="M0.2 0.1 L3.7 3.1 L0.2 6.1 Z" fill="#e4e4e4"/></svg>
<svg style="left:54px;top:434px;transform:translate(0.80px,0.14px)" width="13" height="12.6" viewBox="0 0 13 12.6"><path d="M6.2 2.4 L7.2 0.6 H12.4 V2.6" fill="#3a3a3c" stroke="#dcdcdc" stroke-width="1"/><rect x="0.6" y="2.5" width="11.8" height="9.5" fill="#404042" stroke="#e4e4e4" stroke-width="1.1"/><path d="M0.6 3.9 H12.4" stroke="#e4e4e4" stroke-width="1.9"/></svg>
<span id="t43" class="t" style="left:70.90px;top:434.91px;height:12.35px;line-height:12.35px;font-size:9.5px;color:#f1f1f1;font-family:'Liberation Sans',sans-serif;transform:scaleX(0.9152) rotate(0.03deg);-webkit-text-stroke:0.16px #f1f1f1;">Functions</span>
<svg style="left:45px;top:451px;transform:translate(0.80px,0.38px)" width="3.8" height="6.2" viewBox="0 0 3.8 6.2"><path d="M0.2 0.1 L3.7 3.1 L0.2 6.1 Z" fill="#e4e4e4"/></svg>
<svg style="left:54px;top:447px;transform:translate(0.80px,0.28px)" width="13" height="12.6" viewBox="0 0 13 12.6"><path d="M6.2 2.4 L7.2 0.6 H12.4 V2.6" fill="#3a3a3c" stroke="#dcdcdc" stroke-width="1"/><rect x="0.6" y="2.5" width="11.8" height="9.5" fill="#404042" stroke="#e4e4e4" stroke-width="1.1"/><path d="M0.6 3.9 H12.4" stroke="#e4e4e4" stroke-width="1.9"/></svg>
<span id="t44" class="t" style="left:70.90px;top:448.06px;height:12.35px;line-height:12.35px;font-size:9.5px;color:#f1f1f1;font-family:'Liberation Sans',sans-serif;transform:scaleX(0.9500) rotate(0.03deg);-webkit-text-stroke:0.16px #f1f1f1;">Triggers</span>
<svg style="left:45px;top:464px;transform:translate(0.80px,0.52px)" width="3.8" height="6.2" viewBox="0 0 3.8 6.2"><path d="M0.2 0.1 L3.7 3.1 L0.2 6.1 Z" fill="#e4e4e4"/></svg>
<svg style="left:54px;top:460px;transform:translate(0.80px,0.42px)" width="13" height="12.6" viewBox="0 0 13 12.6"><path d="M6.2 2.4 L7.2 0.6 H12.4 V2.6" fill="#3a3a3c" stroke="#dcdcdc" stroke-width="1"/><rect x="0.6" y="2.5" width="11.8" height="9.5" fill="#404042" stroke="#e4e4e4" stroke-width="1.1"/><path d="M0.6 3.9 H12.4" stroke="#e4e4e4" stroke-width="1.9"/></svg>
<span id="t45" class="t" style="left:70.90px;top:461.20px;height:12.35px;line-height:12.35px;font-size:9.5px;color:#f1f1f1;font-family:'Liberation Sans',sans-serif;transform:scaleX(0.9050) rotate(0.03deg);-webkit-text-stroke:0.16px #f1f1f1;">Events</span>
<svg style="left:45px;top:477px;transform:translate(0.80px,0.66px)" width="3.8" height="6.2" viewBox="0 0 3.8 6.2"><path d="M0.2 0.1 L3.7 3.1 L0.2 6.1 Z" fill="#e4e4e4"/></svg>
<svg style="left:54px;top:473px;transform:translate(0.80px,0.56px)" width="13" height="12.6" viewBox="0 0 13 12.6"><path d="M6.2 2.4 L7.2 0.6 H12.4 V2.6" fill="#3a3a3c" stroke="#dcdcdc" stroke-width="1"/><rect x="0.6" y="2.5" width="11.8" height="9.5" fill="#404042" stroke="#e4e4e4" stroke-width="1.1"/><path d="M0.6 3.9 H12.4" stroke="#e4e4e4" stroke-width="1.9"/></svg>
<span id="t46" class="t" style="left:70.90px;top:474.34px;height:12.35px;line-height:12.35px;font-size:9.5px;color:#f1f1f1;font-family:'Liberation Sans',sans-serif;transform:scaleX(0.9050) rotate(0.03deg);-webkit-text-stroke:0.16px #f1f1f1;">UDFs</span>
<div style="left:188.00px;top:55.80px;width:83.30px;height:15.00px;background:#007acc;"></div>
<span id="t47" class="t" style="left:191.50px;top:57.88px;height:12.35px;line-height:12.35px;font-size:9.5px;color:#ffffff;font-family:'Liberation Sans',sans-serif;transform:scaleX(0.9568) rotate(0.03deg);-webkit-text-stroke:0.16px #ffffff;">Query1.sql*</span>
<svg style="left:245px;top:60px;transform:translate(0.50px,0.50px)" width="9" height="8" viewBox="0 0 9 8"><path d="M0.4 4 H3.2 M3.2 1.4 V6.6 M3.2 2.2 H7.6 V5.4 H3.2 M3.2 4.8 H7.6" fill="none" stroke="#ffffff" stroke-width="0.9"/></svg>
<svg style="left:259px;top:60px;transform:translate(0.30px,0.20px)" width="8" height="8" viewBox="0 0 8 8"><path d="M0.8 0.8 L7.2 7.2 M7.2 0.8 L0.8 7.2" stroke="#ffffff" stroke-width="1.1"/></svg>
<span id="t48" class="t" style="left:275.75px;top:57.88px;height:12.35px;line-height:12.35px;font-size:9.5px;color:#f1f1f1;font-family:'Liberation Sans',sans-serif;transform:scaleX(0.9433) rotate(0.03deg);-webkit-text-stroke:0.16px #f1f1f1;">Table : sakila.film</span>
<span id="t49" class="t" style="left:382.50px;top:57.88px;height:12.35px;line-height:12.35px;font-size:9.5px;color:#f1f1f1;font-family:'Liberation Sans',sans-serif;transform:scaleX(0.9283) rotate(0.03deg);-webkit-text-stroke:0.16px #f1f1f1;">Table : sakila.Books_Authors</span>
<svg style="left:638px;top:59px;transform:translate(0.80px,0.20px)" width="8" height="7" viewBox="0 0 8 7"><rect x="0.4" y="0.2" width="7.2" height="1.6" fill="#f1f1f1"/><path d="M0.6 3 H7.4 L4 6.4 Z" fill="#f1f1f1"/></svg>
<div style="left:188.00px;top:70.00px;width:459.30px;height:2.40px;background:#007acc;"></div>
<svg class="c" style="left:188px;top:72px;transform:translate(0.50px,0.30px);background:#ffffff" width="445.10" height="328.10" viewBox="0 0 445.10 328.10"><defs><linearGradient id="eg" x1="0" y1="0" x2="0" y2="1"><stop offset="0" stop-color="#d9e4f7"/><stop offset="1" stop-color="#fbfcff"/></linearGradient></defs><path d="M4.70 0V328M11.26 0V328M17.82 0V328M24.39 0V328M30.95 0V328M37.52 0V328M44.08 0V328M50.64 0V328M57.21 0V328M63.77 0V328M70.34 0V328M76.90 0V328M83.46 0V328M90.03 0V328M96.59 0V328M103.16 0V328M109.72 0V328M116.28 0V328M122.85 0V328M129.41 0V328M135.98 0V328M142.54 0V328M149.10 0V328M155.67 0V328M162.23 0V328M168.80 0V328M175.36 0V328M181.92 0V328M188.49 0V328M195.05 0V328M201.62 0V328M208.18 0V328M214.74 0V328M221.31 0V328M227.87 0V328M234.44 0V328M241.00 0V328M247.56 0V328M254.13 0V328M260.69 0V328M267.26 0V328M273.82 0V328M280.38 0V328M286.95 0V328M293.51 0V328M300.08 0V328M306.64 0V328M313.20 0V328M319.77 0V328M326.33 0V328M332.90 0V328M339.46 0V328M346.02 0V328M352.59 0V328M359.15 0V328M365.72 0V328M372.28 0V328M378.84 0V328M385.41 0V328M391.97 0V328M398.54 0V328M405.10 0V328M411.66 0V328M418.23 0V328M424.79 0V328M431.36 0V328M437.92 0V328M444.48 0V328M0 6.53H445M0 13.09H445M0 19.66H445M0 26.22H445M0 32.78H445M0 39.35H445M0 45.91H445M0 52.48H445M0 59.04H445M0 65.60H445M0 72.17H445M0 78.73H445M0 85.30H445M0 91.86H445M0 98.42H445M0 104.99H445M0 111.55H445M0 118.12H445M0 124.68H445M0 131.24H445M0 137.81H445M0 144.37H445M0 150.94H445M0 157.50H445M0 164.06H445M0 170.63H445M0 177.19H445M0 183.76H445M0 190.32H445M0 196.88H445M0 203.45H445M0 210.01H445M0 216.58H445M0 223.14H445M0 229.70H445M0 236.27H445M0 242.83H445M0 249.40H445M0 255.96H445M0 262.52H445M0 269.09H445M0 275.65H445M0 282.22H445M0 288.78H445M0 295.34H445M0 301.91H445M0 308.47H445M0 315.04H445M0 321.60H445" stroke="#e3e3e3" stroke-width="0.82" fill="none"/><path d="M241.00 0 V400 M0 157.50 H500" stroke="#b6b6b6" stroke-width="0.9"/><rect x="-35.70" y="3.70" width="89.40" height="74.80" rx="6.5" fill="#a9a9a9"/><rect x="-37.10" y="2.30" width="89.40" height="74.80" rx="6.5" fill="#bdbdbd"/><rect x="-38.50" y="0.90" width="89.40" height="74.80" rx="6.5" fill="url(#eg)" stroke="#a9b6cc" stroke-width="0.9"/><rect x="74.40" y="84.10" width="155.80" height="24" rx="3" fill="#eff3fa"/><rect x="78.30" y="104.70" width="154.30" height="73.40" rx="6.5" fill="#a9a9a9"/><rect x="76.90" y="103.30" width="154.30" height="73.40" rx="6.5" fill="#bdbdbd"/><rect x="75.50" y="101.90" width="154.30" height="73.40" rx="6.5" fill="url(#eg)" stroke="#a9b6cc" stroke-width="0.9"/><rect x="315.90" y="95.90" width="160" height="24" rx="3" fill="#eff3fa"/><rect x="319.10" y="117.10" width="195.20" height="155.20" rx="6.5" fill="#a9a9a9"/><rect x="317.70" y="115.70" width="195.20" height="155.20" rx="6.5" fill="#bdbdbd"/><rect x="316.30" y="114.30" width="195.20" height="155.20" rx="6.5" fill="url(#eg)" stroke="#a9b6cc" stroke-width="0.9"/><path d="M230.30 129.80 L246.40 129.80 L299.90 142.00 L315.10 142.00" fill="none" stroke="#3c3c3c" stroke-width="0.9"/><path d="M315.70 142.00 l-8 -4.1 v8.2 Z" fill="#000000"/><rect x="-3.9" y="-3.9" width="7.8" height="7.8" fill="#d9d9d9" stroke="#5a5a5a" stroke-width="0.8" transform="translate(272.70 135.50) rotate(65.8)"/><path d="M230.30 129.80 L246.40 129.80 L299.90 156.20 L315.10 156.20" fill="none" stroke="#3c3c3c" stroke-width="0.9"/><path d="M315.70 156.20 l-8 -4.1 v8.2 Z" fill="#000000"/><rect x="-3.9" y="-3.9" width="7.8" height="7.8" fill="#d9d9d9" stroke="#5a5a5a" stroke-width="0.8" transform="translate(274.10 143.10) rotate(79.3)"/><path d="M230.30 143.80 L246.40 143.80 L299.90 253.40 L315.10 253.40" fill="none" stroke="#3c3c3c" stroke-width="0.9"/><path d="M315.70 253.40 l-8 -4.1 v8.2 Z" fill="#000000"/><rect x="-3.9" y="-3.9" width="7.8" height="7.8" fill="#d9d9d9" stroke="#5a5a5a" stroke-width="0.8" transform="translate(273.40 198.90) rotate(117.0)"/><g transform="translate(79.10 88.20)"><rect x="0.4" y="0.4" width="9.4" height="8.4" fill="#ffffff" stroke="#444444" stroke-width="0.9"/><rect x="0.4" y="0.4" width="9.4" height="2.2" fill="#444444"/><path d="M0.4 4.6 H9.8 M0.4 6.7 H9.8 M3.5 2.6 V8.8 M6.7 2.6 V8.8" stroke="#555555" stroke-width="0.8"/></g><g transform="translate(320.10 100.30)"><rect x="0.4" y="0.4" width="9.4" height="8.4" fill="#ffffff" stroke="#444444" stroke-width="0.9"/><rect x="0.4" y="0.4" width="9.4" height="2.2" fill="#444444"/><path d="M0.4 4.6 H9.8 M0.4 6.7 H9.8 M3.5 2.6 V8.8 M6.7 2.6 V8.8" stroke="#555555" stroke-width="0.8"/></g><g transform="translate(216.20 86.40)"><rect x="0.4" y="0.4" width="10" height="10" rx="2" fill="#e4e7ee" stroke="#b9bfcc" stroke-width="0.8"/><path d="M2.8 5.2 L5.4 2.8 L8 5.2 M2.8 8.2 L5.4 5.8 L8 8.2" fill="none" stroke="#3d6fd6" stroke-width="1.1"/></g><rect x="90.90" y="110.90" width="9.6" height="9.6" rx="1.6" fill="#fafafa" stroke="#a4a4a4" stroke-width="1.3"/><rect x="92.20" y="112.20" width="7" height="7" rx="0.8" fill="none" stroke="#dedede" stroke-width="1.2"/><rect x="90.90" y="124.83" width="9.6" height="9.6" rx="1.6" fill="#fafafa" stroke="#a4a4a4" stroke-width="1.3"/><rect x="92.20" y="126.13" width="7" height="7" rx="0.8" fill="none" stroke="#dedede" stroke-width="1.2"/><rect x="90.90" y="138.76" width="9.6" height="9.6" rx="1.6" fill="#fafafa" stroke="#a4a4a4" stroke-width="1.3"/><rect x="92.20" y="140.06" width="7" height="7" rx="0.8" fill="none" stroke="#dedede" stroke-width="1.2"/><rect x="90.90" y="152.69" width="9.6" height="9.6" rx="1.6" fill="#fafafa" stroke="#a4a4a4" stroke-width="1.3"/><rect x="92.20" y="153.99" width="7" height="7" rx="0.8" fill="none" stroke="#dedede" stroke-width="1.2"/><g transform="translate(83.10 130.13)"><circle cx="0" cy="-2.9" r="2.4" fill="#f4f4f4" stroke="#4a4a4a" stroke-width="1"/><circle cx="0" cy="-3.4" r="0.7" fill="#4a4a4a"/><path d="M0 -0.5 V5.2 M0 2 H1.5 M0 3.8 H1.5" stroke="#4a4a4a" stroke-width="1.5" fill="none"/><path d="M-0.2 0 V4.8" stroke="#e8e8e8" stroke-width="0.5"/></g><rect x="332.30" y="123.25" width="9.6" height="9.6" rx="1.6" fill="#fafafa" stroke="#a4a4a4" stroke-width="1.3"/><rect x="333.60" y="124.55" width="7" height="7" rx="0.8" fill="none" stroke="#dedede" stroke-width="1.2"/><rect x="332.30" y="137.21" width="9.6" height="9.6" rx="1.6" fill="#fafafa" stroke="#a4a4a4" stroke-width="1.3"/><rect x="333.60" y="138.51" width="7" height="7" rx="0.8" fill="none" stroke="#dedede" stroke-width="1.2"/><rect x="332.30" y="151.17" width="9.6" height="9.6" rx="1.6" fill="#fafafa" stroke="#a4a4a4" stroke-width="1.3"/><rect x="333.60" y="152.47" width="7" height="7" rx="0.8" fill="none" stroke="#dedede" stroke-width="1.2"/><rect x="332.30" y="165.13" width="9.6" height="9.6" rx="1.6" fill="#fafafa" stroke="#a4a4a4" stroke-width="1.3"/><rect x="333.60" y="166.43" width="7" height="7" rx="0.8" fill="none" stroke="#dedede" stroke-width="1.2"/><rect x="332.30" y="179.09" width="9.6" height="9.6" rx="1.6" fill="#fafafa" stroke="#a4a4a4" stroke-width="1.3"/><rect x="333.60" y="180.39" width="7" height="7" rx="0.8" fill="none" stroke="#dedede" stroke-width="1.2"/><rect x="332.30" y="193.05" width="9.6" height="9.6" rx="1.6" fill="#fafafa" stroke="#a4a4a4" stroke-width="1.3"/><rect x="333.60" y="194.35" width="7" height="7" rx="0.8" fill="none" stroke="#dedede" stroke-width="1.2"/><rect x="332.30" y="207.01" width="9.6" height="9.6" rx="1.6" fill="#fafafa" stroke="#a4a4a4" stroke-width="1.3"/><rect x="333.60" y="208.31" width="7" height="7" rx="0.8" fill="none" stroke="#dedede" stroke-width="1.2"/><rect x="332.30" y="220.97" width="9.6" height="9.6" rx="1.6" fill="#fafafa" stroke="#a4a4a4" stroke-width="1.3"/><rect x="333.60" y="222.27" width="7" height="7" rx="0.8" fill="none" stroke="#dedede" stroke-width="1.2"/><rect x="332.30" y="234.93" width="9.6" height="9.6" rx="1.6" fill="#fafafa" stroke="#a4a4a4" stroke-width="1.3"/><rect x="333.60" y="236.23" width="7" height="7" rx="0.8" fill="none" stroke="#dedede" stroke-width="1.2"/><rect x="332.30" y="248.89" width="9.6" height="9.6" rx="1.6" fill="#fafafa" stroke="#a4a4a4" stroke-width="1.3"/><rect x="333.60" y="250.19" width="7" height="7" rx="0.8" fill="none" stroke="#dedede" stroke-width="1.2"/><g transform="translate(324.70 142.51)"><circle cx="0" cy="-2.9" r="2.4" fill="#f4f4f4" stroke="#4a4a4a" stroke-width="1"/><circle cx="0" cy="-3.4" r="0.7" fill="#4a4a4a"/><path d="M0 -0.5 V5.2 M0 2 H1.5 M0 3.8 H1.5" stroke="#4a4a4a" stroke-width="1.5" fill="none"/><path d="M-0.2 0 V4.8" stroke="#e8e8e8" stroke-width="0.5"/></g><g transform="translate(324.10 156.07)"><circle cx="-2.9" cy="0" r="2.6" fill="#f0f0f0" stroke="#5a5a5a" stroke-width="1"/><circle cx="-3.5" cy="0" r="0.7" fill="#5a5a5a"/><path d="M-0.3 0 H5.6 M2.4 0 V1.5 M4.4 0 V1.5" stroke="#5a5a5a" stroke-width="1.5" fill="none"/></g><g transform="translate(324.10 211.91)"><circle cx="-2.9" cy="0" r="2.6" fill="#f0f0f0" stroke="#5a5a5a" stroke-width="1"/><circle cx="-3.5" cy="0" r="0.7" fill="#5a5a5a"/><path d="M-0.3 0 H5.6 M2.4 0 V1.5 M4.4 0 V1.5" stroke="#5a5a5a" stroke-width="1.5" fill="none"/></g></svg>
<div style="left:195.00px;top:78.90px;width:49.00px;height:17.60px;background:#ffffff;border:1px solid #707070;"></div>
<svg style="left:199px;top:82px;transform:translate(0.00px,0.40px)" width="10" height="12" viewBox="0 0 10 12"><path d="M3.2 2.8 V10.4 L4.9 8.9 L6.2 11.7 L7.4 11.1 L6.1 8.4 H8.4 Z" fill="#333333"/><path d="M3.2 0.2 V1.6 M0.4 3 H1.8 M1.2 1 L2.2 2 M5.2 1 L4.4 1.9 M4.8 3 H5.8" stroke="#666" stroke-width="0.8"/></svg>
<span id="t50" class="t" style="left:209.30px;top:84.39px;height:10.92px;line-height:10.92px;font-size:8.4px;color:#0c0c18;font-family:'DejaVu Sans',sans-serif;transform:scaleX(0.8625) rotate(0.03deg);-webkit-text-stroke:0.22px #0c0c18;">SELECT</span>
<span id="t51" class="t" style="left:281.60px;top:158.97px;height:12.35px;line-height:12.35px;font-size:9.5px;color:#111;font-family:'DejaVu Sans',sans-serif;transform:scaleX(0.9242) rotate(0.03deg);font-weight:bold;">country</span>
<span id="t52" class="t" style="left:294.60px;top:183.07px;height:11.96px;line-height:11.96px;font-size:9.2px;color:#0c0c18;font-family:'DejaVu Sans',sans-serif;transform:scaleX(0.9855) rotate(0.03deg);-webkit-text-stroke:0.22px #0c0c18;">*(All Columns)</span>
<span id="t53" class="t" style="left:294.60px;top:197.00px;height:11.96px;line-height:11.96px;font-size:9.2px;color:#0c0c18;font-family:'DejaVu Sans',sans-serif;transform:scaleX(0.9620) rotate(0.03deg);-webkit-text-stroke:0.22px #0c0c18;">country_id</span>
<span id="t54" class="t" style="left:294.60px;top:210.93px;height:11.96px;line-height:11.96px;font-size:9.2px;color:#0c0c18;font-family:'DejaVu Sans',sans-serif;transform:scaleX(0.9304) rotate(0.03deg);-webkit-text-stroke:0.22px #0c0c18;">country</span>
<span id="t55" class="t" style="left:294.60px;top:224.86px;height:11.96px;line-height:11.96px;font-size:9.2px;color:#0c0c18;font-family:'DejaVu Sans',sans-serif;transform:scaleX(0.9448) rotate(0.03deg);-webkit-text-stroke:0.22px #0c0c18;">last_update</span>
<div class="c" style="left:0;top:0;width:633.6px;height:400.4px;"><span id="t56" class="t" style="left:523.00px;top:171.18px;height:12.35px;line-height:12.35px;font-size:9.5px;color:#111;font-family:'DejaVu Sans',sans-serif;transform:scaleX(0.9370) rotate(0.03deg);font-weight:bold;">customer</span><span id="t57" class="t" style="left:536.30px;top:195.42px;height:11.96px;line-height:11.96px;font-size:9.2px;color:#0c0c18;font-family:'DejaVu Sans',sans-serif;transform:scaleX(0.9841) rotate(0.03deg);-webkit-text-stroke:0.22px #0c0c18;">*(All Columns)</span><span id="t58" class="t" style="left:536.30px;top:209.38px;height:11.96px;line-height:11.96px;font-size:9.2px;color:#0c0c18;font-family:'DejaVu Sans',sans-serif;transform:scaleX(0.9582) rotate(0.03deg);-webkit-text-stroke:0.22px #0c0c18;">customer_id</span><span id="t59" class="t" style="left:536.30px;top:223.34px;height:11.96px;line-height:11.96px;font-size:9.2px;color:#0c0c18;font-family:'DejaVu Sans',sans-serif;transform:scaleX(0.9717) rotate(0.03deg);-webkit-text-stroke:0.22px #0c0c18;">store_id</span><span id="t60" class="t" style="left:536.30px;top:237.30px;height:11.96px;line-height:11.96px;font-size:9.2px;color:#0c0c18;font-family:'DejaVu Sans',sans-serif;transform:scaleX(0.9606) rotate(0.03deg);-webkit-text-stroke:0.22px #0c0c18;">first_name</span><span id="t61" class="t" style="left:536.30px;top:251.26px;height:11.96px;line-height:11.96px;font-size:9.2px;color:#0c0c18;font-family:'DejaVu Sans',sans-serif;transform:scaleX(0.9568) rotate(0.03deg);-webkit-text-stroke:0.22px #0c0c18;">last_name</span><span id="t62" class="t" style="left:536.30px;top:265.22px;height:11.96px;line-height:11.96px;font-size:9.2px;color:#0c0c18;font-family:'DejaVu Sans',sans-serif;transform:scaleX(0.9349) rotate(0.03deg);-webkit-text-stroke:0.22px #0c0c18;">email</span><span id="t63" class="t" style="left:536.30px;top:279.18px;height:11.96px;line-height:11.96px;font-size:9.2px;color:#0c0c18;font-family:'DejaVu Sans',sans-serif;transform:scaleX(0.9718) rotate(0.03deg);-webkit-text-stroke:0.22px #0c0c18;">address_id</span><span id="t64" class="t" style="left:536.30px;top:293.14px;height:11.96px;line-height:11.96px;font-size:9.2px;color:#0c0c18;font-family:'DejaVu Sans',sans-serif;transform:scaleX(0.9197) rotate(0.03deg);-webkit-text-stroke:0.22px #0c0c18;">active</span><span id="t65" class="t" style="left:536.30px;top:307.10px;height:11.96px;line-height:11.96px;font-size:9.2px;color:#0c0c18;font-family:'DejaVu Sans',sans-serif;transform:scaleX(0.9579) rotate(0.03deg);-webkit-text-stroke:0.22px #0c0c18;">create_date</span><span id="t66" class="t" style="left:536.30px;top:321.06px;height:11.96px;line-height:11.96px;font-size:9.2px;color:#0c0c18;font-family:'DejaVu Sans',sans-serif;transform:scaleX(0.9467) rotate(0.03deg);-webkit-text-stroke:0.22px #0c0c18;">last_update</span></div>
<div style="left:633.60px;top:72.30px;width:13.70px;height:341.30px;background:#3e3e42;"></div>
<div style="left:633.60px;top:400.40px;width:13.70px;height:13.20px;background:#333337;"></div>
<div style="left:637.00px;top:192.00px;width:6.70px;height:92.00px;background:#686868;"></div>
<svg style="left:636px;top:77px;transform:translate(0.50px,0.00px)" width="7" height="4" viewBox="0 0 7 4"><path d="M0 4 H7 L3.5 0.2 Z" fill="#999999"/></svg>
<svg style="left:636px;top:392px;transform:translate(0.30px,0.70px)" width="7" height="3.6" viewBox="0 0 7 4"><path d="M0 0 H7 L3.5 3.8 Z" fill="#999999"/></svg>
<div style="left:188.00px;top:400.40px;width:445.60px;height:13.20px;background:#3e3e42;"></div>
<div style="left:393.80px;top:404.00px;width:104.90px;height:6.60px;background:#686868;"></div>
<svg style="left:192px;top:403px;transform:translate(0.60px,0.70px)" width="4" height="7" viewBox="0 0 4 7"><path d="M4 0 V7 L0.2 3.5 Z" fill="#999999"/></svg>
<svg style="left:624px;top:403px;transform:translate(0.80px,0.70px)" width="4" height="7" viewBox="0 0 4 7"><path d="M0 0 V7 L3.8 3.5 Z" fill="#999999"/></svg>
<svg style="left:634px;top:401px;transform:translate(0.20px,0.00px)" width="12.2" height="11.3" viewBox="0 0 13 12"><circle cx="4.8" cy="4.6" r="3.7" fill="#cfe6fb" stroke="#8fb8e0" stroke-width="1"/><path d="M7.6 7.4 L11.6 11" stroke="#d6a45a" stroke-width="2"/><path d="M3 3.6 a2.2 2.2 0 0 1 2.6 -1" stroke="#ffffff" stroke-width="0.9" fill="none"/></svg>
<div style="left:188.00px;top:72.30px;width:0.60px;height:554.00px;background:#222224;"></div>
<div style="left:188.00px;top:414.00px;width:460.00px;height:213.00px;background:#2d2d30;border:1px solid #39393d;border-top:none;"></div>
<svg style="left:414px;top:417px;transform:translate(0.60px,0.20px)" width="6" height="3" viewBox="0 0 6 3"><path d="M0 0 H6 L3 3 Z" fill="#5c5c60"/></svg>
<div style="left:190.30px;top:444.10px;width:456.00px;height:0.90px;background:#3f3f46;"></div>
<div style="left:190.30px;top:426.30px;width:51.60px;height:18.70px;background:#2d2d30;border:1px solid #3f3f46;border-bottom:none;"></div>
<span id="t67" class="t" style="left:199.00px;top:430.14px;height:12.22px;line-height:12.22px;font-size:9.4px;color:#2a9bf0;font-family:'Liberation Sans',sans-serif;transform:scaleX(0.8471) rotate(0.03deg);-webkit-text-stroke:0.16px #2a9bf0;"><u>S</u>election</span>
<div style="left:241.60px;top:426.30px;width:36.10px;height:18.10px;border-top:1px solid #3f3f46;border-right:1px solid #3f3f46;"></div>
<span id="t68" class="t" style="left:249.60px;top:430.14px;height:12.22px;line-height:12.22px;font-size:9.4px;color:#dcdcdc;font-family:'Liberation Sans',sans-serif;transform:scaleX(0.8357) rotate(0.03deg);-webkit-text-stroke:0.16px #dcdcdc;"><u>J</u>oins</span>
<div style="left:276.80px;top:426.30px;width:42.70px;height:18.10px;border-top:1px solid #3f3f46;border-right:1px solid #3f3f46;"></div>
<span id="t69" class="t" style="left:285.00px;top:430.14px;height:12.22px;line-height:12.22px;font-size:9.4px;color:#dcdcdc;font-family:'Liberation Sans',sans-serif;transform:scaleX(0.8976) rotate(0.03deg);-webkit-text-stroke:0.16px #dcdcdc;"><u>W</u>here</span>
<div style="left:318.60px;top:426.30px;width:51.90px;height:18.10px;border-top:1px solid #3f3f46;border-right:1px solid #3f3f46;"></div>
<span id="t70" class="t" style="left:326.60px;top:430.14px;height:12.22px;line-height:12.22px;font-size:9.4px;color:#dcdcdc;font-family:'Liberation Sans',sans-serif;transform:scaleX(0.8684) rotate(0.03deg);-webkit-text-stroke:0.16px #dcdcdc;"><u>G</u>roup By</span>
<div style="left:369.60px;top:426.30px;width:43.10px;height:18.10px;border-top:1px solid #3f3f46;border-right:1px solid #3f3f46;"></div>
<span id="t71" class="t" style="left:377.60px;top:430.14px;height:12.22px;line-height:12.22px;font-size:9.4px;color:#dcdcdc;font-family:'Liberation Sans',sans-serif;transform:scaleX(0.8833) rotate(0.03deg);-webkit-text-stroke:0.16px #dcdcdc;"><u>H</u>aving</span>
<div style="left:411.80px;top:426.30px;width:51.50px;height:18.10px;border-top:1px solid #3f3f46;border-right:1px solid #3f3f46;"></div>
<span id="t72" class="t" style="left:420.00px;top:430.14px;height:12.22px;line-height:12.22px;font-size:9.4px;color:#dcdcdc;font-family:'Liberation Sans',sans-serif;transform:scaleX(0.8928) rotate(0.03deg);-webkit-text-stroke:0.16px #dcdcdc;"><u>O</u>rder By</span>
<div style="left:197.30px;top:453.60px;width:9.40px;height:9.30px;background:#252526;border:1px solid #3f3f46;"></div>
<span id="t73" class="t" style="left:209.80px;top:452.84px;height:12.22px;line-height:12.22px;font-size:9.4px;color:#e8e8e8;font-family:'Liberation Sans',sans-serif;transform:scaleX(0.8791) rotate(0.03deg);-webkit-text-stroke:0.16px #e8e8e8;">Unique records</span>
<div style="left:189.60px;top:469.90px;width:16.80px;height:17.90px;background:#2c2c2f;border:1px solid #262628;"></div>
<div style="left:189.60px;top:487.50px;width:16.80px;height:17.90px;background:#2c2c2f;border:1px solid #262628;"></div>
<div style="left:189.60px;top:505.60px;width:16.80px;height:17.90px;background:#2c2c2f;border:1px solid #262628;"></div>
<svg style="left:192px;top:473px;transform:translate(0.80px,0.00px)" width="9" height="11.2" viewBox="0 0 12 14"><path d="M6 0.8 L11.2 7 H8.6 V13 L6 10.6 L3.4 13 V7 H0.8 Z" fill="#8e8e92" stroke="#e4e4e4" stroke-width="1.2" stroke-linejoin="round"/><path d="M6 3.6 L8 6.2 H7 V9 H5 V6.2 H4 Z" fill="#3a3a3e"/></svg>
<svg style="left:192px;top:491px;transform:translate(0.80px,0.80px)" width="9" height="11.2" viewBox="0 0 12 14"><path d="M6 13.2 L11.2 7 H8.6 V1 L6 3.4 L3.4 1 V7 H0.8 Z" fill="#7a7a7e" stroke="#b4b4b8" stroke-width="1.2" stroke-linejoin="round"/><path d="M6 10.4 L8 7.8 H7 V5 H5 V7.8 H4 Z" fill="#3a3a3e"/></svg>
<svg style="left:192px;top:509px" width="13" height="13" viewBox="0 0 13 13"><path d="M1.8 2.4 L11.2 11.6 M10.8 1.6 L1.6 11.2" stroke="#c4c4c8" stroke-width="2.6" stroke-linecap="round"/><path d="M2.4 3 L10.6 11 M10.2 2.2 L2.2 10.6" stroke="#8a8a8e" stroke-width="0.9" stroke-linecap="round"/></svg>
<div style="left:207.60px;top:469.80px;width:438.40px;height:122.40px;background:#252526;"></div>
<div style="left:222.30px;top:485.00px;width:423.50px;height:16.50px;background:#434346;"></div>
<div style="left:566.70px;top:485.50px;width:57.20px;height:15.60px;background:#28282a;"></div>
<div style="left:207.60px;top:469.40px;width:438.20px;height:0.90px;background:#3f3f46;"></div>
<div style="left:222.30px;top:484.60px;width:423.50px;height:0.90px;background:#3f3f46;"></div>
<div style="left:222.30px;top:501.10px;width:423.50px;height:0.90px;background:#3f3f46;"></div>
<div style="left:222.30px;top:517.00px;width:423.50px;height:0.90px;background:#3f3f46;"></div>
<div style="left:207.60px;top:484.60px;width:15.00px;height:0.90px;background:#3f3f46;"></div>
<div style="left:221.90px;top:469.80px;width:0.90px;height:47.60px;background:#3f3f46;"></div>
<div style="left:415.00px;top:469.80px;width:0.90px;height:47.60px;background:#3f3f46;"></div>
<div style="left:472.80px;top:469.80px;width:0.90px;height:47.60px;background:#3f3f46;"></div>
<div style="left:565.80px;top:469.80px;width:0.90px;height:47.60px;background:#3f3f46;"></div>
<div style="left:623.90px;top:469.80px;width:0.90px;height:47.60px;background:#3f3f46;"></div>
<div style="left:645.40px;top:469.80px;width:0.90px;height:47.60px;background:#3f3f46;"></div>
<div style="left:207.60px;top:469.80px;width:0.90px;height:15.20px;background:#3f3f46;"></div>
<span id="t74" class="t" style="left:224.90px;top:472.04px;height:12.22px;line-height:12.22px;font-size:9.4px;color:#e8e8e8;font-family:'Liberation Sans',sans-serif;transform:scaleX(0.8385) rotate(0.03deg);-webkit-text-stroke:0.16px #e8e8e8;">Column</span>
<span id="t75" class="t" style="left:418.00px;top:472.04px;height:12.22px;line-height:12.22px;font-size:9.4px;color:#e8e8e8;font-family:'Liberation Sans',sans-serif;transform:scaleX(0.9590) rotate(0.03deg);-webkit-text-stroke:0.16px #e8e8e8;">Alias</span>
<span id="t76" class="t" style="left:476.00px;top:472.04px;height:12.22px;line-height:12.22px;font-size:9.4px;color:#e8e8e8;font-family:'Liberation Sans',sans-serif;transform:scaleX(0.9586) rotate(0.03deg);-webkit-text-stroke:0.16px #e8e8e8;">Table</span>
<span id="t77" class="t" style="left:568.80px;top:472.04px;height:12.22px;line-height:12.22px;font-size:9.4px;color:#e8e8e8;font-family:'Liberation Sans',sans-serif;transform:scaleX(0.9059) rotate(0.03deg);-webkit-text-stroke:0.16px #e8e8e8;">Aggregate</span>
<span id="t78" class="t" style="left:626.90px;top:472.04px;height:12.22px;line-height:12.22px;font-size:9.4px;color:#e8e8e8;font-family:'Liberation Sans',sans-serif;transform:scaleX(0.9355) rotate(0.03deg);-webkit-text-stroke:0.16px #e8e8e8;">Sort</span>
<svg style="left:212px;top:489px;transform:translate(0.80px,0.80px)" width="4" height="7" viewBox="0 0 4 7"><path d="M0.2 0.2 V6.8 L3.8 3.5 Z" fill="#f1f1f1"/></svg>
<span id="t79" class="t" style="left:225.30px;top:486.33px;height:13.65px;line-height:13.65px;font-size:10.5px;color:#f1f1f1;font-family:'Liberation Sans',sans-serif;transform:scaleX(0.9200) rotate(0.03deg);-webkit-text-stroke:0.16px #f1f1f1;">*</span>
<span id="t80" class="t" style="left:213.60px;top:504.80px;height:14.30px;line-height:14.30px;font-size:11px;color:#c8c8c8;font-family:'Liberation Sans',sans-serif;transform:scaleX(0.9200) rotate(0.03deg);font-weight:bold;">*</span>
<svg style="left:614px;top:492px;transform:translate(0.30px,0.05px)" width="5.40" height="3.06" viewBox="0 0 6 3.4"><path d="M0 0 H6 L3 3.2 Z" fill="#6e6e72"/></svg>
<div style="left:207.60px;top:578.50px;width:438.40px;height:13.60px;background:#3e3e42;"></div>
<div style="left:221.00px;top:582.30px;width:313.00px;height:6.60px;background:#686868;"></div>
<svg style="left:212px;top:582px;transform:translate(0.20px,0.20px)" width="4" height="7" viewBox="0 0 4 7"><path d="M4 0 V7 L0.2 3.5 Z" fill="#999999"/></svg>
<svg style="left:636px;top:582px;transform:translate(0.30px,0.20px)" width="4" height="7" viewBox="0 0 4 7"><path d="M0 0 V7 L3.8 3.5 Z" fill="#999999"/></svg>
<div style="left:189.20px;top:596.30px;width:78.00px;height:16.40px;border:1px solid #1c6aa0;"></div>
<svg style="left:192px;top:598px;transform:translate(0.20px,0.20px)" width="13" height="13" viewBox="0 0 13 13"><rect x="0.6" y="0.6" width="11.8" height="11.8" rx="2.6" fill="#2d2d30" stroke="#f1f1f1" stroke-width="1.1"/><path d="M6.5 2.6 V10.4 M2.6 6.5 H10.4 M5.2 4 L6.5 2.6 L7.8 4 M5.2 9 L6.5 10.4 L7.8 9 M4 5.2 L2.6 6.5 L4 7.8 M9 5.2 L10.4 6.5 L9 7.8" fill="none" stroke="#f1f1f1" stroke-width="0.9"/></svg>
<span id="t81" class="t" style="left:208.40px;top:598.98px;height:12.35px;line-height:12.35px;font-size:9.5px;color:#f1f1f1;font-family:'Liberation Sans',sans-serif;transform:scaleX(0.9535) rotate(0.03deg);-webkit-text-stroke:0.16px #f1f1f1;">Query Builder</span>
<div style="left:270.00px;top:598.00px;width:1.00px;height:13.50px;background:#3f3f46;"></div>
<svg style="left:275px;top:598px;transform:translate(0.00px,0.50px)" width="14" height="12" viewBox="0 0 14 12"><rect x="3" y="0.6" width="8" height="3.4" fill="#77777b"/><rect x="0.6" y="3.6" width="12.8" height="5.6" rx="1" fill="#8a8a8e"/><rect x="3" y="7" width="8" height="4.4" fill="#6a6a6e" stroke="#9a9a9e" stroke-width="0.7"/></svg>
<div style="left:293.90px;top:598.00px;width:1.00px;height:13.50px;background:#3f3f46;"></div>
<svg style="left:300px;top:598px;transform:translate(0.50px,0.50px)" width="10" height="12" viewBox="0 0 10 12"><path d="M0.6 0.6 H6.4 L9.4 3.6 V11.4 H0.6 Z" fill="#2d2d30" stroke="#f1f1f1" stroke-width="1"/><path d="M2.6 4.4 H7.2 M2.6 6.4 H7.2 M2.6 8.4 H7.2" stroke="#f1f1f1" stroke-width="0.8"/></svg>
<span id="t82" class="t" style="left:315.00px;top:598.98px;height:12.35px;line-height:12.35px;font-size:9.5px;color:#f1f1f1;font-family:'Liberation Sans',sans-serif;transform:scaleX(0.9746) rotate(0.03deg);-webkit-text-stroke:0.16px #f1f1f1;">Text</span>
<div style="left:589.00px;top:596.00px;width:17.80px;height:16.60px;border:1px solid #1c6aa0;"></div>
<svg style="left:592px;top:598px;transform:translate(0.00px,0.50px)" width="12" height="11" viewBox="0 0 12 11"><rect x="0.5" y="0.5" width="11" height="10" fill="#f1f1f1"/><rect x="1.6" y="2.6" width="8.8" height="2.4" fill="#2d2d30"/><rect x="1.6" y="6.6" width="8.8" height="2.6" fill="#2d2d30"/></svg>
<svg style="left:610px;top:598px;transform:translate(0.50px,0.50px)" width="12" height="11" viewBox="0 0 12 11"><rect x="0.5" y="0.5" width="11" height="10" fill="#f1f1f1"/><rect x="1.6" y="2.8" width="8.8" height="6.6" fill="#e4e4e4" stroke="#2d2d30" stroke-width="0.6"/></svg>
<svg style="left:631px;top:600px;transform:translate(0.50px,0.50px)" width="8" height="8" viewBox="0 0 8 8"><path d="M0.8 3.8 L4 0.8 L7.2 3.8 M0.8 7 L4 4 L7.2 7" fill="none" stroke="#d0d0d0" stroke-width="0.9"/></svg>
<svg style="left:188px;top:616px;transform:translate(0.80px,0.60px)" width="9.4" height="9" viewBox="0 0 9.4 9"><rect x="0" y="0" width="9.4" height="9" rx="0.8" fill="#6a2b86"/><path d="M6.6 1 L8.6 1.8 V7.2 L6.6 8 Z" fill="#ffffff"/><path d="M1.3 2.9 L6.8 6.7 M1.3 6.1 L6.8 2.3" fill="none" stroke="#ffffff" stroke-width="1.25"/><path d="M1.1 2.6 V6.4" stroke="#ffffff" stroke-width="0.8"/></svg>
<span id="t83" class="t" style="left:201.70px;top:614.54px;height:12.22px;line-height:12.22px;font-size:9.4px;color:#f1f1f1;font-family:'Liberation Sans',sans-serif;transform:scaleX(0.9174) rotate(0.03deg);-webkit-text-stroke:0.16px #f1f1f1;white-space:pre;">Make review of dbForge Fusion for MySQL on </span>
<span id="t84" class="t" style="left:379.70px;top:614.54px;height:12.22px;line-height:12.22px;font-size:9.4px;color:#2a8ee6;font-family:'Liberation Sans',sans-serif;transform:scaleX(0.9359) rotate(0.03deg);-webkit-text-stroke:0.16px #2a8ee6;text-decoration:underline;">Visual Studio Gallery</span>
<div style="left:653.00px;top:55.00px;width:110.00px;height:313.00px;background:#3a3a3e;"></div>
<div style="left:653.00px;top:367.00px;width:55.00px;height:17.00px;background:#3a3a3e;"></div>
<div style="left:654.00px;top:56.00px;width:108.00px;height:311.00px;background:#252526;"></div>
<div style="left:654.00px;top:56.00px;width:108.00px;height:39.00px;background:#2d2d30;"></div>
<span id="t85" class="t" style="left:656.50px;top:59.28px;height:12.35px;line-height:12.35px;font-size:9.5px;color:#d0d0d0;font-family:'Liberation Sans',sans-serif;transform:scaleX(0.9604) rotate(0.03deg);-webkit-text-stroke:0.16px #d0d0d0;">Solution Explorer</span>
<svg style="left:728px;top:63px;transform:translate(0.85px,0.38px)" width="5.70" height="3.23" viewBox="0 0 6 3.4"><path d="M0 0 H6 L3 3.2 Z" fill="#f1f1f1"/></svg>
<svg style="left:740px;top:60px;transform:translate(0.50px,0.00px)" width="7" height="10" viewBox="0 0 7 10"><path d="M1.6 0.6 H5.4 V5 M1.6 0.6 V5 M4.4 0.6 V5 M0.4 5.2 H6.6 M3.5 5.2 V9.4" fill="none" stroke="#f1f1f1" stroke-width="1"/></svg>
<svg style="left:753px;top:60px;transform:translate(0.20px,0.80px)" width="8" height="8" viewBox="0 0 8 8"><path d="M0.8 0.8 L7.2 7.2 M7.2 0.8 L0.8 7.2" stroke="#f1f1f1" stroke-width="1.3"/></svg>
<svg style="left:660px;top:79px;transform:translate(0.80px,0.30px)" width="9" height="9" viewBox="0 0 9 9"><circle cx="4.5" cy="4.5" r="4.2" fill="#4d4d51"/><path d="M6.8 4.5 H2.6 M4.3 2.6 L2.4 4.5 L4.3 6.4" fill="none" stroke="#2d2d30" stroke-width="1.1"/></svg>
<svg style="left:677px;top:79px;transform:translate(0.50px,0.30px)" width="9" height="9" viewBox="0 0 9 9"><circle cx="4.5" cy="4.5" r="4.2" fill="#4d4d51"/><path d="M2.2 4.5 H6.4 M4.7 2.6 L6.6 4.5 L4.7 6.4" fill="none" stroke="#2d2d30" stroke-width="1.1"/></svg>
<svg style="left:693px;top:78px;transform:translate(0.50px,0.00px)" width="12" height="11" viewBox="0 0 12 11"><path d="M0.8 5.8 L6 0.8 L11.2 5.8 M2.4 4.8 V10.4 H4.8 V7 H7.2 V10.4 H9.6 V4.8 M8.4 1.2 V3" fill="none" stroke="#f1f1f1" stroke-width="1.1"/></svg>
<svg style="left:711px;top:77px;transform:translate(0.00px,0.50px)" width="12" height="12" viewBox="0 0 12 12"><rect x="4.6" y="0.6" width="6.4" height="5.4" fill="#dcb67a"/><rect x="0.6" y="4" width="7.6" height="6.4" fill="#2d2d30" stroke="#f1f1f1" stroke-width="1"/><rect x="0.6" y="4" width="7.6" height="1.6" fill="#f1f1f1"/><path d="M9.4 7.4 V9.6 H11.4 M1.4 2.6 V0.8 H3.4" fill="none" stroke="#56a8f0" stroke-width="1"/></svg>
<svg style="left:727px;top:82px;transform:translate(0.85px,0.92px)" width="5.10" height="2.89" viewBox="0 0 6 3.4"><path d="M0 0 H6 L3 3.2 Z" fill="#8a8a8e"/></svg>
<div style="left:738.00px;top:76.50px;width:1.00px;height:14.50px;background:#46464a;"></div>
<svg style="left:755px;top:76px;transform:translate(0.50px,0.00px)" width="5" height="3" viewBox="0 0 5 3"><rect x="0.3" y="0.4" width="1.2" height="1.6" fill="#8a8a8e"/><rect x="3.2" y="0.4" width="1.2" height="1.6" fill="#8a8a8e"/></svg>
<div style="left:654.50px;top:94.80px;width:107.00px;height:15.80px;background:#333337;border:1px solid #3f3f46;"></div>
<div style="left:752.60px;top:95.30px;width:9.60px;height:14.80px;background:#3f3f46;"></div>
<div class="c" style="left:656px;top:95px;width:78.9px;height:15px;"><span id="t86" class="t" style="left:1.70px;top:2.38px;height:12.35px;line-height:12.35px;font-size:9.5px;color:#9a9a9a;font-family:'Liberation Sans',sans-serif;transform:scaleX(0.9200) rotate(0.03deg);-webkit-text-stroke:0.16px #9a9a9a;">Search Solution Explorer (Ctrl+;)</span></div>
<svg style="left:740px;top:97px;transform:translate(0.00px,0.50px)" width="10" height="10" viewBox="0 0 12 12"><circle cx="7.6" cy="4.4" r="3" fill="none" stroke="#f1f1f1" stroke-width="1.7"/><path d="M5.4 6.6 L1.2 10.8" stroke="#f1f1f1" stroke-width="2.1" stroke-linecap="round"/></svg>
<svg style="left:754px;top:101px;transform:translate(0.40px,0.80px)" width="4.80" height="2.72" viewBox="0 0 6 3.4"><path d="M0 0 H6 L3 3.2 Z" fill="#f1f1f1"/></svg>
<div style="left:654.00px;top:111.60px;width:108.00px;height:15.40px;background:#3f3f46;"></div>
<svg style="left:662px;top:113px;transform:translate(0.50px,0.50px)" width="13" height="12" viewBox="0 0 13 12"><rect x="2.2" y="0.7" width="10" height="8.6" fill="#252526" stroke="#e0e0e0" stroke-width="1"/><rect x="2.2" y="0.7" width="10" height="1.8" fill="#e0e0e0"/><path d="M4.4 5.2 L6.2 6 V10.8 L4.4 11.6 L1.8 9.2 L0.9 9.8 L0.3 9.5 V7.3 L0.9 7 L1.8 7.6 Z M4.4 7 L3 8.4 L4.4 9.8 Z" fill="#a66fd8" fill-rule="evenodd"/></svg>
<div class="c" style="left:677px;top:111.6px;width:85.0px;height:15.4px;"><span id="t87" class="t" style="left:2.20px;top:1.97px;height:12.35px;line-height:12.35px;font-size:9.5px;color:#ffffff;font-family:'Liberation Sans',sans-serif;transform:scaleX(0.9747) rotate(0.03deg);-webkit-text-stroke:0.16px #ffffff;">Solution 'Solution1'</span><span id="t88" class="t" style="left:83.20px;top:1.97px;height:12.35px;line-height:12.35px;font-size:9.5px;color:#ffffff;font-family:'Liberation Sans',sans-serif;transform:scaleX(0.9200) rotate(0.03deg);-webkit-text-stroke:0.16px #ffffff;">(0 projects)</span></div>
<div style="left:654.00px;top:355.00px;width:108.00px;height:12.20px;background:#3e3e42;"></div>
<div style="left:666.50px;top:357.90px;width:58.00px;height:6.70px;background:#686868;"></div>
<svg style="left:658px;top:357px;transform:translate(0.40px,0.80px)" width="4" height="7" viewBox="0 0 4 7"><path d="M4 0 V7 L0.2 3.5 Z" fill="#999999"/></svg>
<svg style="left:753px;top:357px;transform:translate(0.20px,0.80px)" width="4" height="7" viewBox="0 0 4 7"><path d="M0 0 V7 L3.8 3.5 Z" fill="#999999"/></svg>
<div style="left:654.00px;top:367.20px;width:53.20px;height:16.00px;background:#252526;"></div>
<span id="t89" class="t" style="left:657.30px;top:369.98px;height:12.35px;line-height:12.35px;font-size:9.5px;color:#2a9bf0;font-family:'Liberation Sans',sans-serif;transform:scaleX(0.9631) rotate(0.03deg);-webkit-text-stroke:0.16px #2a9bf0;">Solution...</span>
<span id="t90" class="t" style="left:713.00px;top:369.98px;height:12.35px;line-height:12.35px;font-size:9.5px;color:#f1f1f1;font-family:'Liberation Sans',sans-serif;transform:scaleX(0.8968) rotate(0.03deg);-webkit-text-stroke:0.16px #f1f1f1;">Team Exp...</span>
<div style="left:653.00px;top:389.00px;width:110.00px;height:238.00px;background:#3a3a3e;"></div>
<div style="left:654.00px;top:390.00px;width:108.00px;height:236.00px;background:#252526;"></div>
<div style="left:654.00px;top:390.00px;width:108.00px;height:17.00px;background:#2d2d30;"></div>
<span id="t91" class="t" style="left:656.80px;top:392.48px;height:12.35px;line-height:12.35px;font-size:9.5px;color:#d0d0d0;font-family:'Liberation Sans',sans-serif;transform:scaleX(0.9442) rotate(0.03deg);-webkit-text-stroke:0.16px #d0d0d0;">Properties</span>
<svg style="left:701px;top:396px" width="21" height="5" viewBox="0 0 21 5"><path d="M0 0.8 H21 M1.3 2.5 H21 M0 4.2 H21" stroke="#46464a" stroke-width="0.8" stroke-dasharray="0.9 1.7"/></svg>
<svg style="left:724px;top:396px;transform:translate(0.75px,0.57px)" width="5.70" height="3.23" viewBox="0 0 6 3.4"><path d="M0 0 H6 L3 3.2 Z" fill="#f1f1f1"/></svg>
<svg style="left:737px;top:393px;transform:translate(0.00px,0.20px)" width="7" height="10" viewBox="0 0 7 10"><path d="M1.6 0.6 H5.4 V5 M1.6 0.6 V5 M4.4 0.6 V5 M0.4 5.2 H6.6 M3.5 5.2 V9.4" fill="none" stroke="#f1f1f1" stroke-width="1"/></svg>
<svg style="left:749px;top:394px;transform:translate(0.50px,0.00px)" width="8" height="8" viewBox="0 0 8 8"><path d="M0.8 0.8 L7.2 7.2 M7.2 0.8 L0.8 7.2" stroke="#f1f1f1" stroke-width="1.3"/></svg>
<div style="left:654.50px;top:406.70px;width:107.00px;height:17.30px;background:#2b2b2e;"></div>
<span id="t92" class="t" style="left:658.30px;top:409.77px;height:12.35px;line-height:12.35px;font-size:9.5px;color:#ffffff;font-family:'Liberation Sans',sans-serif;transform:scaleX(0.9202) rotate(0.03deg);font-weight:bold;">Query1.sql</span>
<span id="t93" class="t" style="left:708.40px;top:409.77px;height:12.35px;line-height:12.35px;font-size:9.5px;color:#e0e0e0;font-family:'Liberation Sans',sans-serif;transform:scaleX(0.9737) rotate(0.03deg);-webkit-text-stroke:0.16px #e0e0e0;">Query</span>
<svg style="left:754px;top:414px;transform:translate(0.55px,0.68px)" width="4.50" height="2.55" viewBox="0 0 6 3.4"><path d="M0 0 H6 L3 3.2 Z" fill="#d0d0d0"/></svg>
<div style="left:654.00px;top:424.00px;width:108.00px;height:20.50px;background:#2d2d30;"></div>
<div style="left:656.00px;top:426.00px;width:17.80px;height:16.80px;background:#252526;border:1px solid #2b86d0;"></div>
<svg style="left:658px;top:428px;transform:translate(0.60px,0.60px)" width="12.4" height="12" viewBox="0 0 12.4 12"><g fill="none" stroke="#e4e4e4" stroke-width="1.1"><rect x="0.9" y="0.9" width="2.8" height="2.8"/><rect x="0.9" y="7.9" width="2.8" height="2.8"/></g><g fill="#9a9a9e"><rect x="5.2" y="0.6" width="3" height="1.2"/><rect x="5.2" y="2.6" width="5.6" height="1.3"/><rect x="5.2" y="4.6" width="5.6" height="1.3"/><rect x="5.2" y="6.4" width="5.6" height="1"/><rect x="5.2" y="8" width="3" height="1.2"/><rect x="5.2" y="10" width="3" height="1.1"/><rect x="9" y="10.3" width="1.8" height="0.9" fill="#d8d8d8"/></g></svg>
<svg style="left:676px;top:428px;transform:translate(0.20px,0.60px)" width="13" height="12" viewBox="0 0 13 12"><rect x="0.3" y="0.3" width="5.4" height="5.6" fill="#d4d4d4"/><path d="M1.6 5 L3 1.4 L4.4 5 M2.1 3.8 H3.9" fill="none" stroke="#2d2d30" stroke-width="0.9"/><path d="M0.8 7.6 H5 L0.8 11 H5.2" fill="none" stroke="#e4e4e4" stroke-width="1.3"/><path d="M9.3 2.6 V9.4 M6.9 7 L9.3 9.8 L11.7 7" fill="none" stroke="#55c2f5" stroke-width="1.5"/></svg>
<div style="left:693.30px;top:427.00px;width:1.00px;height:15.00px;background:#3a3a3e;"></div>
<svg style="left:697px;top:427px;transform:translate(0.60px,0.60px)" width="14" height="13" viewBox="0 0 14 13"><path d="M1.6 11.4 L8.4 5" stroke="#848488" stroke-width="3.4" stroke-linecap="round"/><circle cx="9.6" cy="4" r="3.5" fill="#848488"/><path d="M10 2.6 L13.4 0.2 L14 3.4 Z" fill="#2d2d30"/></svg>
<div style="left:654.00px;top:445.30px;width:11.60px;height:118.00px;background:#2d2d30;"></div>
<div style="left:654.00px;top:445.30px;width:108.00px;height:30.20px;background:#2d2d30;"></div>
<svg style="left:656px;top:449px;transform:translate(0.60px,0.40px)" width="7" height="7" viewBox="0 0 7 7"><rect x="0.5" y="0.5" width="6" height="6" fill="none" stroke="#eeeeee" stroke-width="1"/><path d="M1.8 3.5 H5.2" stroke="#eeeeee" stroke-width="1"/></svg>
<span id="t94" class="t" style="left:668.60px;top:446.98px;height:12.35px;line-height:12.35px;font-size:9.5px;color:#f1f1f1;font-family:'Liberation Sans',sans-serif;transform:scaleX(0.8471) rotate(0.03deg);font-weight:bold;">Misc</span>
<div class="c" style="left:667px;top:460.90px;width:36.6px;height:14.6px;"><span id="t95" class="t" style="left:1.60px;top:1.77px;height:12.35px;line-height:12.35px;font-size:9.5px;color:#9a9a9a;font-family:'Liberation Sans',sans-serif;transform:scaleX(0.9200) rotate(0.03deg);-webkit-text-stroke:0.16px #9a9a9a;">Background Color</span></div>
<div style="left:665.20px;top:475.10px;width:96.80px;height:0.80px;background:#2d2d30;"></div>
<div class="c" style="left:667px;top:475.50px;width:36.6px;height:14.6px;"><span id="t96" class="t" style="left:1.60px;top:1.77px;height:12.35px;line-height:12.35px;font-size:9.5px;color:#9a9a9a;font-family:'Liberation Sans',sans-serif;transform:scaleX(0.9200) rotate(0.03deg);-webkit-text-stroke:0.16px #9a9a9a;">Enable Borders</span></div>
<span id="t97" class="t" style="left:707.80px;top:477.28px;height:12.35px;line-height:12.35px;font-size:9.5px;color:#b8b8b8;font-family:'Liberation Sans',sans-serif;transform:scaleX(0.9200) rotate(0.03deg);-webkit-text-stroke:0.16px #b8b8b8;">True</span>
<div style="left:665.20px;top:489.70px;width:96.80px;height:0.80px;background:#2d2d30;"></div>
<div class="c" style="left:667px;top:490.10px;width:36.6px;height:14.6px;"><span id="t98" class="t" style="left:1.60px;top:1.77px;height:12.35px;line-height:12.35px;font-size:9.5px;color:#9a9a9a;font-family:'Liberation Sans',sans-serif;transform:scaleX(0.9200) rotate(0.03deg);-webkit-text-stroke:0.16px #9a9a9a;">Enable Grid</span></div>
<span id="t99" class="t" style="left:707.80px;top:491.88px;height:12.35px;line-height:12.35px;font-size:9.5px;color:#b8b8b8;font-family:'Liberation Sans',sans-serif;transform:scaleX(0.9200) rotate(0.03deg);-webkit-text-stroke:0.16px #b8b8b8;">True</span>
<div style="left:665.20px;top:504.30px;width:96.80px;height:0.80px;background:#2d2d30;"></div>
<div class="c" style="left:667px;top:504.70px;width:36.6px;height:14.6px;"><span id="t100" class="t" style="left:1.60px;top:1.77px;height:12.35px;line-height:12.35px;font-size:9.5px;color:#9a9a9a;font-family:'Liberation Sans',sans-serif;transform:scaleX(0.9200) rotate(0.03deg);-webkit-text-stroke:0.16px #9a9a9a;">Enable Group</span></div>
<span id="t101" class="t" style="left:707.80px;top:506.48px;height:12.35px;line-height:12.35px;font-size:9.5px;color:#b8b8b8;font-family:'Liberation Sans',sans-serif;transform:scaleX(0.9200) rotate(0.03deg);-webkit-text-stroke:0.16px #b8b8b8;">True</span>
<div style="left:665.20px;top:518.90px;width:96.80px;height:0.80px;background:#2d2d30;"></div>
<div class="c" style="left:667px;top:519.30px;width:36.6px;height:14.6px;"><span id="t102" class="t" style="left:1.60px;top:1.77px;height:12.35px;line-height:12.35px;font-size:9.5px;color:#9a9a9a;font-family:'Liberation Sans',sans-serif;transform:scaleX(0.9200) rotate(0.03deg);-webkit-text-stroke:0.16px #9a9a9a;">Enable Slider</span></div>
<span id="t103" class="t" style="left:707.80px;top:521.07px;height:12.35px;line-height:12.35px;font-size:9.5px;color:#b8b8b8;font-family:'Liberation Sans',sans-serif;transform:scaleX(0.9200) rotate(0.03deg);-webkit-text-stroke:0.16px #b8b8b8;">True</span>
<div style="left:665.20px;top:533.50px;width:96.80px;height:0.80px;background:#2d2d30;"></div>
<div class="c" style="left:667px;top:533.90px;width:36.6px;height:14.6px;"><span id="t104" class="t" style="left:1.60px;top:1.77px;height:12.35px;line-height:12.35px;font-size:9.5px;color:#9a9a9a;font-family:'Liberation Sans',sans-serif;transform:scaleX(0.9200) rotate(0.03deg);-webkit-text-stroke:0.16px #9a9a9a;">Grid Size</span></div>
<span id="t105" class="t" style="left:707.80px;top:535.68px;height:12.35px;line-height:12.35px;font-size:9.5px;color:#b8b8b8;font-family:'Liberation Sans',sans-serif;transform:scaleX(0.9200) rotate(0.03deg);-webkit-text-stroke:0.16px #b8b8b8;">8</span>
<div style="left:665.20px;top:548.10px;width:96.80px;height:0.80px;background:#2d2d30;"></div>
<div class="c" style="left:667px;top:548.50px;width:36.6px;height:14.6px;"><span id="t106" class="t" style="left:1.60px;top:1.77px;height:12.35px;line-height:12.35px;font-size:9.5px;color:#9a9a9a;font-family:'Liberation Sans',sans-serif;transform:scaleX(0.9200) rotate(0.03deg);-webkit-text-stroke:0.16px #9a9a9a;">Skin Type</span></div>
<span id="t107" class="t" style="left:707.80px;top:550.27px;height:12.35px;line-height:12.35px;font-size:9.5px;color:#b8b8b8;font-family:'Liberation Sans',sans-serif;transform:scaleX(0.9200) rotate(0.03deg);-webkit-text-stroke:0.16px #b8b8b8;">Default</span>
<div style="left:665.20px;top:562.70px;width:96.80px;height:0.80px;background:#2d2d30;"></div>
<div style="left:704.00px;top:460.90px;width:0.80px;height:102.20px;background:#2d2d30;"></div>
<div style="left:707.00px;top:462.30px;width:14.40px;height:11.20px;background:#ffffff;border:1px solid #1e1e1e;"></div>
<div class="c" style="left:726px;top:460.9px;width:35.5px;height:14.6px;"><span id="t108" class="t" style="left:1.80px;top:1.78px;height:12.35px;line-height:12.35px;font-size:9.5px;color:#b8b8b8;font-family:'Liberation Sans',sans-serif;transform:scaleX(0.9200) rotate(0.03deg);-webkit-text-stroke:0.16px #b8b8b8;">Window</span></div>
<div style="left:654.00px;top:576.60px;width:108.00px;height:0.90px;background:#2d2d30;"></div>
<span id="t109" class="t" style="left:658.30px;top:583.38px;height:12.35px;line-height:12.35px;font-size:9.5px;color:#ffffff;font-family:'Liberation Sans',sans-serif;transform:scaleX(0.9218) rotate(0.03deg);font-weight:bold;">Background Color</span>
</div></body></html>
